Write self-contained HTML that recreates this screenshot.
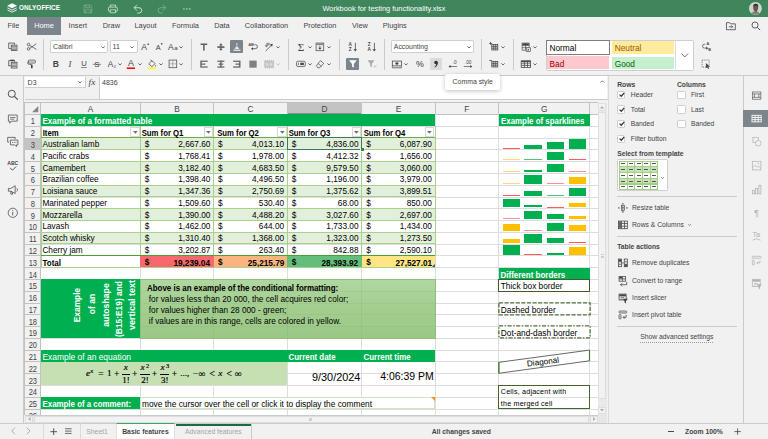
<!DOCTYPE html>
<html><head><meta charset="utf-8"><title>Workbook for testing functionality.xlsx</title>
<style>
html,body{margin:0;padding:0}
body{width:768px;height:439px;overflow:hidden;position:relative;background:#f1f1f1;font-family:'Liberation Sans',sans-serif;color:#444}
div,svg{position:absolute;box-sizing:border-box}
.t{white-space:nowrap}
svg{overflow:visible}
.c{font-family:'Liberation Sans',sans-serif;white-space:nowrap;color:#000}
</style></head><body>
<div style="left:0.00px;top:0.00px;width:768.00px;height:17.20px;background:#40865c"></div>
<svg style="left:5.75px;top:2.40px;" width="12.2" height="12.2" viewBox="0 0 20 20"><path d="M10 2.2 L18.2 6.2 L10 10.2 L1.8 6.2 Z" fill="#fff" /><path d="M2.4 9.6 L10 13.3 L17.6 9.6 M2.4 13 L10 16.7 L17.6 13" fill="none" stroke="#fff" stroke-width="1.4" /></svg>
<div class="t" style="left:19.00px;top:4.36px;font-size:6.45px;line-height:8.38px;color:#fff;font-weight:bold;letter-spacing:0.02px">ONLYOFFICE</div>
<svg style="left:82.00px;top:2.60px;opacity:.4" width="11.8" height="11.8" viewBox="0 0 20 20"><path d="M3.5 3.5 H14 L16.5 6 V16.5 H3.5 Z M6.5 3.5 V8 H13 V3.5 M6 16.5 V11.5 H14 V16.5" fill="none" stroke="#fff" stroke-width="1.1" /></svg>
<svg style="left:107.00px;top:2.60px;" width="11.8" height="11.8" viewBox="0 0 20 20"><path d="M5.5 7 V3.5 H14.5 V7 M5.5 14 H3 a.8 .8 0 0 1 -.5 -.8 V8.5 a1.5 1.5 0 0 1 1.5 -1.5 H16 a1.5 1.5 0 0 1 1.5 1.5 V13.2 a.8 .8 0 0 1 -.5 .8 H14.5 M5.5 11.5 H14.5 V16.5 H5.5 Z" fill="none" stroke="#fff" stroke-width="1.0" /></svg>
<svg style="left:132.10px;top:2.60px;" width="11.8" height="11.8" viewBox="0 0 20 20"><path d="M8.5 3 L3.5 8 L8.5 13 M3.5 8 H12 a4.5 4.5 0 0 1 0 9 H9" fill="none" stroke="#fff" stroke-width="1.2" /></svg>
<svg style="left:156.00px;top:2.60px;opacity:.4" width="11.8" height="11.8" viewBox="0 0 20 20"><path d="M11.5 3 L16.5 8 L11.5 13 M16.5 8 H8 a4.5 4.5 0 0 0 0 9 H11" fill="none" stroke="#fff" stroke-width="1.2" /></svg>
<svg style="left:181.20px;top:2.60px;opacity:.85" width="11.8" height="11.8" viewBox="0 0 20 20"><circle cx="5" cy="10" r="1.2" fill="#fff"/><circle cx="10" cy="10" r="1.2" fill="#fff"/><circle cx="15" cy="10" r="1.2" fill="#fff"/></svg>
<div class="t" style="left:322.50px;top:3.69px;font-size:7.4px;line-height:9.62px;color:#fff;">Workbook for testing functionality.xlsx</div>
<svg style="left:749px;top:2.1px" width="12.8" height="12.8" viewBox="0 0 24 24"><defs><clipPath id="av"><circle cx="12" cy="12" r="12"/></clipPath></defs><circle cx="12" cy="12" r="12" fill="#cbd6ce"/><g clip-path="url(#av)"><path d="M7.5 17.5 q4.8 3.4 9.6 0 l1.2 3 q3.4 1.2 3.8 3.6 h-19.6 q.4 -2.4 3.8 -3.6z" fill="#8a8078"/><rect x="10" y="15" width="5" height="5" fill="#77685c"/><ellipse cx="12.5" cy="10.6" rx="4.6" ry="6.2" fill="#6a574b"/><path d="M7.7 9.6 q.2 -6.4 5 -6.4 q4.8 0 4.8 6 q-1.4 -3.2 -5 -3 q-3.2 .2 -4.8 3.4z" fill="#2a2420"/></g></svg>
<div style="left:0.00px;top:17.20px;width:768.00px;height:17.50px;background:#f1f1f1"></div>
<div style="left:26.80px;top:17.20px;width:33.90px;height:17.50px;background:#7d858c"></div>
<div class="t" style="left:7.40px;top:20.72px;font-size:7.35px;line-height:9.55px;color:#444;">File</div>
<div class="t" style="left:34.20px;top:20.72px;font-size:7.35px;line-height:9.55px;color:#fff;">Home</div>
<div class="t" style="left:68.60px;top:20.72px;font-size:7.35px;line-height:9.55px;color:#444;">Insert</div>
<div class="t" style="left:102.80px;top:20.72px;font-size:7.35px;line-height:9.55px;color:#444;">Draw</div>
<div class="t" style="left:134.50px;top:20.72px;font-size:7.35px;line-height:9.55px;color:#444;">Layout</div>
<div class="t" style="left:172.00px;top:20.72px;font-size:7.35px;line-height:9.55px;color:#444;">Formula</div>
<div class="t" style="left:214.20px;top:20.72px;font-size:7.35px;line-height:9.55px;color:#444;">Data</div>
<div class="t" style="left:244.80px;top:20.72px;font-size:7.35px;line-height:9.55px;color:#444;">Collaboration</div>
<div class="t" style="left:303.40px;top:20.72px;font-size:7.35px;line-height:9.55px;color:#444;">Protection</div>
<div class="t" style="left:352.00px;top:20.72px;font-size:7.35px;line-height:9.55px;color:#444;">View</div>
<div class="t" style="left:382.70px;top:20.72px;font-size:7.35px;line-height:9.55px;color:#444;">Plugins</div>
<svg style="left:724.90px;top:20.30px;" width="11.8" height="11.8" viewBox="0 0 20 20"><path d="M2.5 4.5 H8 L9.5 6.5 H17.5 V16.5 H2.5 Z" fill="none" stroke="#444" stroke-width="1.35" /><path d="M6.5 11.5 H13 M10.5 9 L13 11.5 L10.5 14" fill="none" stroke="#444" stroke-width="1.3" /></svg>
<svg style="left:749.60px;top:20.30px;" width="11.8" height="11.8" viewBox="0 0 20 20"><circle cx="8.5" cy="8.5" r="5.2" fill="none" stroke="#444" stroke-width="1.4"/><path d="M12.4 12.4 L17.2 17.2" fill="none" stroke="#444" stroke-width="1.6" /></svg>
<div style="left:0.00px;top:34.70px;width:768.00px;height:41.10px;background:#f1f1f1;border-bottom:0.7px solid #cbcbcb"></div>
<div style="left:43.35px;top:39.40px;width:0.70px;height:31.10px;background:#cbcbcb"></div>
<div style="left:191.35px;top:39.40px;width:0.70px;height:31.10px;background:#cbcbcb"></div>
<div style="left:288.25px;top:39.40px;width:0.70px;height:31.10px;background:#cbcbcb"></div>
<div style="left:339.05px;top:39.40px;width:0.70px;height:31.10px;background:#cbcbcb"></div>
<div style="left:384.25px;top:39.40px;width:0.70px;height:31.10px;background:#cbcbcb"></div>
<div style="left:480.65px;top:39.40px;width:0.70px;height:31.10px;background:#cbcbcb"></div>
<div style="left:513.05px;top:39.40px;width:0.70px;height:31.10px;background:#cbcbcb"></div>
<svg style="left:6.50px;top:41.00px;" width="11.8" height="11.8" viewBox="0 0 20 20"><rect x="3" y="3.5" width="9.6" height="9" fill="none" stroke="#444" stroke-width="1.3" /><rect x="6.6" y="6.4" width="10.9" height="10.2" fill="#f1f1f1" /><rect x="7.2" y="7" width="9.7" height="9" fill="none" stroke="#444" stroke-width="1.3" /><rect x="8" y="9" width="8" height="1.3" fill="#666" /><rect x="8" y="11.2" width="8" height="1.3" fill="#666" /><rect x="8" y="13.4" width="8" height="1.3" fill="#666" /></svg>
<svg style="left:25.50px;top:41.00px;" width="11.8" height="11.8" viewBox="0 0 20 20"><path d="M6.3 7.4 L17.6 14.2 M6.3 12.6 L17.6 4.6" fill="none" stroke="#444" stroke-width="1.25" /><circle cx="4.3" cy="6" r="2.2" fill="none" stroke="#444" stroke-width="1.25"/><circle cx="4.3" cy="13.4" r="2.2" fill="none" stroke="#444" stroke-width="1.25"/></svg>
<svg style="left:6.50px;top:57.80px;" width="11.8" height="11.8" viewBox="0 0 20 20"><rect x="3" y="4.6" width="10" height="8.6" fill="none" stroke="#444" stroke-width="1.3" /><rect x="5.6" y="2.8" width="6.6" height="2.4" fill="#444" /><rect x="6.6" y="6.6" width="10.9" height="10.9" fill="#f1f1f1" /><rect x="7.2" y="7.2" width="9.7" height="9.8" fill="none" stroke="#444" stroke-width="1.3" /><rect x="8" y="9.2" width="8" height="1.3" fill="#666" /><rect x="8" y="11.5" width="8" height="1.3" fill="#666" /><rect x="8" y="13.8" width="8" height="1.3" fill="#666" /></svg>
<svg style="left:25.50px;top:57.80px;" width="11.8" height="11.8" viewBox="0 0 20 20"><rect x="4.2" y="3.6" width="11.6" height="5" fill="none" stroke="#444" stroke-width="1.3" rx="1"/><rect x="5.4" y="4.6" width="9.4" height="3" fill="#bbb" /><path d="M3.2 6 V10.2 L9.7 11.4" fill="none" stroke="#444" stroke-width="1.2" /><rect x="8.4" y="11.4" width="2.8" height="6" fill="#444" /></svg>
<div style="left:50.40px;top:40.40px;width:57.40px;height:12.90px;background:#fff;border:0.7px solid #cfcfcf;border-radius:1.2px"></div>
<div class="t" style="left:53.00px;top:42.91px;font-size:6.9px;line-height:8.97px;color:#444;">Calibri</div>
<svg style="left:101.15px;top:45.85px" width="4.1" height="2.6" viewBox="0 0 10 6.4"><path d="M1 1.1 L5 4.9 L9 1.1" fill="none" stroke="#444" stroke-width="2"/></svg>
<div style="left:110.00px;top:40.40px;width:27.50px;height:12.90px;background:#fff;border:0.7px solid #cfcfcf;border-radius:1.2px"></div>
<div class="t" style="left:112.60px;top:42.91px;font-size:6.9px;line-height:8.97px;color:#444;">11</div>
<svg style="left:130.45px;top:45.85px" width="4.1" height="2.6" viewBox="0 0 10 6.4"><path d="M1 1.1 L5 4.9 L9 1.1" fill="none" stroke="#444" stroke-width="2"/></svg>
<svg style="left:138.50px;top:41.00px;" width="11.8" height="11.8" viewBox="0 0 20 20"><text x="8.6" y="16" font-size="14.5" text-anchor="middle" fill="#444" font-family="Liberation Sans,sans-serif">A</text><path d="M13.6 6.2 l2 -2.6 l2 2.6 z" fill="#444" /></svg>
<svg style="left:152.60px;top:41.00px;" width="11.8" height="11.8" viewBox="0 0 20 20"><text x="8.8" y="16" font-size="12.5" text-anchor="middle" fill="#444" font-family="Liberation Sans,sans-serif">A</text><path d="M12.8 4 l2 2.6 l2 -2.6 z" fill="#444" /></svg>
<svg style="left:166.70px;top:41.00px;" width="11.8" height="11.8" viewBox="0 0 20 20"><text x="6.5" y="15.5" font-size="14.5" text-anchor="middle" fill="#444" font-family="Liberation Sans,sans-serif">A</text><text x="15.3" y="15.5" font-size="10.5" text-anchor="middle" fill="#444" font-family="Liberation Sans,sans-serif">a</text></svg>
<svg style="left:179.35px;top:45.90px" width="4.1" height="2.6" viewBox="0 0 10 6.4"><path d="M1 1.1 L5 4.9 L9 1.1" fill="none" stroke="#444" stroke-width="2"/></svg>
<svg style="left:50.20px;top:57.90px;" width="11.8" height="11.8" viewBox="0 0 20 20"><text x="10" y="15.5" font-size="14.5" font-weight="bold" text-anchor="middle" fill="#444" font-family="Liberation Sans,sans-serif">B</text></svg>
<svg style="left:63.60px;top:57.90px;" width="11.8" height="11.8" viewBox="0 0 20 20"><text x="10" y="15.5" font-size="14.5" font-style="italic" text-anchor="middle" fill="#444" font-family="Liberation Serif,serif">I</text></svg>
<svg style="left:77.60px;top:57.90px;" width="11.8" height="11.8" viewBox="0 0 20 20"><text x="10" y="14" font-size="13" text-anchor="middle" fill="#444" font-family="Liberation Sans,sans-serif">U</text><rect x="5" y="16" width="10" height="1" fill="#444" /></svg>
<svg style="left:91.20px;top:57.90px;" width="11.8" height="11.8" viewBox="0 0 20 20"><text x="10" y="15" font-size="13.5" text-anchor="middle" fill="#444" font-family="Liberation Sans,sans-serif">S</text><rect x="3" y="10" width="14" height="1" fill="#444" /></svg>
<svg style="left:106.10px;top:57.90px;" width="11.8" height="11.8" viewBox="0 0 20 20"><text x="7.5" y="15" font-size="14" text-anchor="middle" fill="#444" font-family="Liberation Sans,sans-serif">A</text><text x="15" y="17" font-size="7" text-anchor="middle" fill="#444" font-family="Liberation Sans,sans-serif">2</text></svg>
<svg style="left:117.95px;top:62.80px" width="4.1" height="2.6" viewBox="0 0 10 6.4"><path d="M1 1.1 L5 4.9 L9 1.1" fill="none" stroke="#444" stroke-width="2"/></svg>
<svg style="left:125.40px;top:57.90px;" width="11.8" height="11.8" viewBox="0 0 20 20"><text x="10" y="13.8" font-size="15" text-anchor="middle" fill="#444" font-family="Liberation Sans,sans-serif">A</text><rect x="3" y="16" width="14" height="2.6" fill="#ff0000" /></svg>
<svg style="left:138.45px;top:62.80px" width="4.1" height="2.6" viewBox="0 0 10 6.4"><path d="M1 1.1 L5 4.9 L9 1.1" fill="none" stroke="#444" stroke-width="2"/></svg>
<svg style="left:145.80px;top:57.90px;" width="11.8" height="11.8" viewBox="0 0 20 20"><path d="M4.6 10 L10.2 4.4 L15.4 9.6 L10 14.6 Z M7.6 2.8 L11 6.2" fill="none" stroke="#444" stroke-width="1.25" /><path d="M16.6 11.4 q1.8 2.6 0 3.6 q-1.8 -1 0 -3.6" fill="#444" /><rect x="3" y="16" width="14" height="2.6" fill="#ffff00" /></svg>
<svg style="left:158.85px;top:62.80px" width="4.1" height="2.6" viewBox="0 0 10 6.4"><path d="M1 1.1 L5 4.9 L9 1.1" fill="none" stroke="#444" stroke-width="2"/></svg>
<svg style="left:166.60px;top:57.90px;" width="11.8" height="11.8" viewBox="0 0 20 20"><rect x="3.5" y="3.5" width="13" height="13" fill="none" stroke="#444" stroke-width="1.2" /><rect x="9.5" y="4" width="1" height="12" fill="#888" /><rect x="4" y="9.5" width="12" height="1" fill="#888" /></svg>
<svg style="left:179.35px;top:62.80px" width="4.1" height="2.6" viewBox="0 0 10 6.4"><path d="M1 1.1 L5 4.9 L9 1.1" fill="none" stroke="#444" stroke-width="2"/></svg>
<svg style="left:198.10px;top:41.00px;" width="11.8" height="11.8" viewBox="0 0 20 20"><rect x="4.4" y="4.2" width="11.2" height="2.6" fill="#606060" /><rect x="8.7" y="6" width="2.6" height="10.4" fill="#606060" /></svg>
<svg style="left:214.50px;top:41.00px;" width="11.8" height="11.8" viewBox="0 0 20 20"><rect x="4" y="9" width="12" height="2.6" fill="#555" /><path d="M10 4 l3 3.4 h-6 z M10 16.6 l3 -3.4 h-6 z" fill="#555" /><rect x="9.2" y="6" width="1.6" height="9" fill="#555" /></svg>
<div style="left:230.40px;top:40.00px;width:12.60px;height:12.90px;background:#7d858c;border-radius:1px"></div>
<svg style="left:230.80px;top:41.00px;" width="11.8" height="11.8" viewBox="0 0 20 20"><rect x="4" y="14.6" width="12" height="2.2" fill="#e4e6e8" /><rect x="9.3" y="3.4" width="1.4" height="9" fill="#e4e6e8" /><path d="M6 13.6 h8 l-2 -3.4 h-4 z" fill="#e4e6e8" /></svg>
<svg style="left:247.10px;top:41.00px;" width="11.8" height="11.8" viewBox="0 0 20 20"><text x="7" y="8.6" font-size="7" font-weight="bold" text-anchor="middle" fill="#555" font-family="Liberation Sans,sans-serif">AB</text><path d="M12.6 6.2 h1.6 a3.4 3.4 0 0 1 0 6.8 H9.5" fill="none" stroke="#444" stroke-width="1.3" /><path d="M10.2 10.4 l-3.4 2.6 l3.4 2.6 z" fill="#444" /></svg>
<svg style="left:262.90px;top:41.00px;" width="11.8" height="11.8" viewBox="0 0 20 20"><path d="M4.5 17 L14.5 7" fill="none" stroke="#444" stroke-width="1.3" /><text x="4.2" y="8.6" font-size="7.6" font-weight="bold" fill="#555" font-family="Liberation Sans,sans-serif" transform="rotate(-45 8 8)">ab</text><path d="M16.6 4.8 l-1.2 5 l-3.8 -3.8 z" fill="#444" /></svg>
<svg style="left:276.05px;top:45.90px" width="4.1" height="2.6" viewBox="0 0 10 6.4"><path d="M1 1.1 L5 4.9 L9 1.1" fill="none" stroke="#444" stroke-width="2"/></svg>
<svg style="left:198.40px;top:57.90px;" width="11.8" height="11.8" viewBox="0 0 20 20"><rect x="4" y="4.4" width="2.2" height="12" fill="#555" /><rect x="6" y="4.4" width="10.4" height="2.2" fill="#6a6a6a" /><rect x="6" y="9.3" width="6.4" height="2.2" fill="#6a6a6a" /><rect x="6" y="14.2" width="10.4" height="2.2" fill="#6a6a6a" /></svg>
<svg style="left:214.50px;top:57.90px;" width="11.8" height="11.8" viewBox="0 0 20 20"><rect x="8.9" y="4.4" width="2.2" height="12" fill="#555" /><rect x="4" y="4.4" width="12" height="2.2" fill="#6a6a6a" /><rect x="6" y="9.3" width="8" height="2.2" fill="#6a6a6a" /><rect x="4" y="14.2" width="12" height="2.2" fill="#6a6a6a" /></svg>
<svg style="left:230.70px;top:57.90px;" width="11.8" height="11.8" viewBox="0 0 20 20"><rect x="13.8" y="4.4" width="2.2" height="12" fill="#555" /><rect x="3.6" y="4.4" width="10.4" height="2.2" fill="#6a6a6a" /><rect x="7.6" y="9.3" width="6.4" height="2.2" fill="#6a6a6a" /><rect x="3.6" y="14.2" width="10.4" height="2.2" fill="#6a6a6a" /></svg>
<svg style="left:246.90px;top:57.90px;" width="11.8" height="11.8" viewBox="0 0 20 20"><rect x="4" y="4.4" width="12.4" height="12" fill="#808080" /></svg>
<svg style="left:262.60px;top:57.90px;" width="11.8" height="11.8" viewBox="0 0 20 20"><rect x="3.2" y="5" width="14.4" height="11" fill="#c9c9c9" /><rect x="2.8" y="4.6" width="15.2" height="11.8" fill="none" stroke="#9a9a9a" stroke-width="1.2" stroke-dasharray="2.2 1.4"/><path d="M6 8.4 l2.6 2.2 l-2.6 2.2 z M14.6 8.4 l-2.6 2.2 l2.6 2.2 z" fill="#f1f1f1" /></svg>
<svg style="left:276.05px;top:62.80px" width="4.1" height="2.6" viewBox="0 0 10 6.4"><path d="M1 1.1 L5 4.9 L9 1.1" fill="none" stroke="#b5b5b5" stroke-width="2"/></svg>
<svg style="left:294.90px;top:41.00px;" width="11.8" height="11.8" viewBox="0 0 20 20"><text x="10" y="16.5" font-size="19" text-anchor="middle" fill="#444" font-family="Liberation Serif,serif">Σ</text></svg>
<svg style="left:308.05px;top:45.90px" width="4.1" height="2.6" viewBox="0 0 10 6.4"><path d="M1 1.1 L5 4.9 L9 1.1" fill="none" stroke="#444" stroke-width="2"/></svg>
<svg style="left:313.90px;top:41.00px;" width="11.8" height="11.8" viewBox="0 0 20 20"><rect x="3.5" y="3.5" width="13" height="13" fill="none" stroke="#444" stroke-width="1.2" /><rect x="4" y="4" width="12" height="3" fill="#888" /><rect x="9.4" y="8" width="1.2" height="5" fill="#444" /><path d="M10 15 l-3 -3.5 h6 z" fill="#444" /></svg>
<svg style="left:327.35px;top:45.90px" width="4.1" height="2.6" viewBox="0 0 10 6.4"><path d="M1 1.1 L5 4.9 L9 1.1" fill="none" stroke="#444" stroke-width="2"/></svg>
<svg style="left:295.10px;top:57.90px;" width="11.8" height="11.8" viewBox="0 0 20 20"><rect x="2.5" y="5.5" width="15" height="9" fill="none" stroke="#444" stroke-width="1.2" rx="2.5"/><rect x="9" y="8" width="6" height="4" fill="#444" /><rect x="5" y="8" width="1.2" height="4" fill="#444" /></svg>
<svg style="left:308.05px;top:62.80px" width="4.1" height="2.6" viewBox="0 0 10 6.4"><path d="M1 1.1 L5 4.9 L9 1.1" fill="none" stroke="#444" stroke-width="2"/></svg>
<svg style="left:313.90px;top:57.90px;" width="11.8" height="11.8" viewBox="0 0 20 20"><path d="M4 13 L11 4.5 L16.5 9 L10 16.5 H6.5 Z M7 9.5 L12.5 14" fill="none" stroke="#444" stroke-width="1.2" /></svg>
<svg style="left:327.35px;top:62.80px" width="4.1" height="2.6" viewBox="0 0 10 6.4"><path d="M1 1.1 L5 4.9 L9 1.1" fill="none" stroke="#444" stroke-width="2"/></svg>
<svg style="left:346.70px;top:41.00px;" width="11.8" height="11.8" viewBox="0 0 20 20"><text x="5.5" y="9" font-size="8" font-weight="bold" text-anchor="middle" fill="#444" font-family="Liberation Sans,sans-serif">A</text><text x="5.5" y="17.5" font-size="8" font-weight="bold" text-anchor="middle" fill="#444" font-family="Liberation Sans,sans-serif">Z</text><rect x="13.4" y="3" width="1.3" height="12" fill="#444" /><path d="M14 18 l-3 -4 h6 z" fill="#444" /></svg>
<svg style="left:366.10px;top:41.00px;" width="11.8" height="11.8" viewBox="0 0 20 20"><text x="5.5" y="9" font-size="8" font-weight="bold" text-anchor="middle" fill="#444" font-family="Liberation Sans,sans-serif">Z</text><text x="5.5" y="17.5" font-size="8" font-weight="bold" text-anchor="middle" fill="#444" font-family="Liberation Sans,sans-serif">A</text><rect x="13.4" y="3" width="1.3" height="12" fill="#444" /><path d="M14 18 l-3 -4 h6 z" fill="#444" /></svg>
<div style="left:346.20px;top:57.60px;width:12.60px;height:12.50px;background:#7d858c;border-radius:1px"></div>
<svg style="left:346.60px;top:57.90px;" width="11.8" height="11.8" viewBox="0 0 20 20"><path d="M3.5 4 h13 l-5 6 v6.5 l-3 -2 v-4.5 z" fill="#fff" /></svg>
<svg style="left:365.80px;top:57.90px;" width="11.8" height="11.8" viewBox="0 0 20 20"><path d="M2.5 4 h12 l-4.6 5.6 v6 l-2.8 -1.8 v-4.2 z" fill="#aaa" /><path d="M13.5 12.5 l4 4 M17.5 12.5 l-4 4" fill="none" stroke="#aaa" stroke-width="1" /></svg>
<div style="left:391.20px;top:40.40px;width:83.10px;height:12.90px;background:#fff;border:0.7px solid #cfcfcf;border-radius:1.2px"></div>
<div class="t" style="left:393.80px;top:42.91px;font-size:6.9px;line-height:8.97px;color:#444;">Accounting</div>
<svg style="left:467.35px;top:45.85px" width="4.1" height="2.6" viewBox="0 0 10 6.4"><path d="M1 1.1 L5 4.9 L9 1.1" fill="none" stroke="#444" stroke-width="2"/></svg>
<svg style="left:391.00px;top:57.90px;" width="11.8" height="11.8" viewBox="0 0 20 20"><rect x="2.2" y="5.2" width="15.6" height="8.2" fill="none" stroke="#444" stroke-width="1.3" /><ellipse cx="10" cy="9.3" rx="2.6" ry="2.2" fill="#444"/><path d="M2.2 14.2 V16.6 H17.8 V14.2" fill="none" stroke="#444" stroke-width="1.2" /></svg>
<svg style="left:404.45px;top:62.80px" width="4.1" height="2.6" viewBox="0 0 10 6.4"><path d="M1 1.1 L5 4.9 L9 1.1" fill="none" stroke="#444" stroke-width="2"/></svg>
<svg style="left:413.90px;top:57.90px;" width="11.8" height="11.8" viewBox="0 0 20 20"><text x="10" y="15.6" font-size="15" text-anchor="middle" fill="#333" font-family="Liberation Sans,sans-serif">%</text></svg>
<div style="left:429.90px;top:58.00px;width:12.00px;height:11.80px;background:#d8dadc;border-radius:1px"></div>
<svg style="left:430.00px;top:57.90px;" width="11.8" height="11.8" viewBox="0 0 20 20"><circle cx="10.2" cy="7.6" r="3.1" fill="#333"/><path d="M13.3 7.4 q.4 5.8 -5 8.8 l-.8 -1.1 q3 -1.9 3 -5.1 z" fill="#333" /></svg>
<svg style="left:446.90px;top:57.90px;" width="11.8" height="11.8" viewBox="0 0 20 20"><text x="13" y="9.5" font-size="8" text-anchor="middle" fill="#444" font-family="Liberation Sans,sans-serif">.0</text><rect x="5" y="14" width="12" height="1.1" fill="#444" /><path d="M2.5 14.5 l3.5 -2.6 v5.2 z" fill="#444" /></svg>
<svg style="left:462.20px;top:57.90px;" width="11.8" height="11.8" viewBox="0 0 20 20"><text x="10.5" y="9.5" font-size="8" text-anchor="middle" fill="#444" font-family="Liberation Sans,sans-serif">.00</text><rect x="3" y="14" width="12" height="1.1" fill="#444" /><path d="M17.5 14.5 l-3.5 -2.6 v5.2 z" fill="#444" /></svg>
<svg style="left:487.70px;top:41.00px;" width="11.8" height="11.8" viewBox="0 0 20 20"><rect x="6.4" y="5.8" width="10.2" height="9.4" fill="none" stroke="#444" stroke-width="1.3" /><rect x="9.15" y="5.8" width="1.3" height="9.4" fill="#444" /><rect x="12.549999999999999" y="5.8" width="1.3" height="9.4" fill="#444" /><rect x="6.4" y="8.283333333333333" width="10.2" height="1.3" fill="#444" /><rect x="6.4" y="11.416666666666666" width="10.2" height="1.3" fill="#444" /><rect x="3.9" y="1.6" width="1.2" height="4.8" fill="#333" /><rect x="2.1" y="3.4" width="4.8" height="1.2" fill="#333" /></svg>
<svg style="left:500.85px;top:45.90px" width="4.1" height="2.6" viewBox="0 0 10 6.4"><path d="M1 1.1 L5 4.9 L9 1.1" fill="none" stroke="#444" stroke-width="2"/></svg>
<svg style="left:487.70px;top:57.90px;" width="11.8" height="11.8" viewBox="0 0 20 20"><rect x="6.4" y="5.8" width="10.2" height="9.4" fill="none" stroke="#444" stroke-width="1.3" /><rect x="9.15" y="5.8" width="1.3" height="9.4" fill="#444" /><rect x="12.549999999999999" y="5.8" width="1.3" height="9.4" fill="#444" /><rect x="6.4" y="8.283333333333333" width="10.2" height="1.3" fill="#444" /><rect x="6.4" y="11.416666666666666" width="10.2" height="1.3" fill="#444" /><rect x="2.1" y="3.4" width="4.8" height="1.2" fill="#333" /></svg>
<svg style="left:500.85px;top:62.80px" width="4.1" height="2.6" viewBox="0 0 10 6.4"><path d="M1 1.1 L5 4.9 L9 1.1" fill="none" stroke="#444" stroke-width="2"/></svg>
<svg style="left:519.50px;top:41.00px;" width="11.8" height="11.8" viewBox="0 0 20 20"><rect x="3.5" y="3.5" width="12" height="12" fill="none" stroke="#444" stroke-width="1.1" /><rect x="8.95" y="3.5" width="1.1" height="12" fill="#444" /><rect x="3.5" y="6.95" width="12" height="1.1" fill="#444" /><rect x="3.5" y="10.95" width="12" height="1.1" fill="#444" /><rect x="4" y="4" width="11" height="3" fill="#444" /><rect x="10" y="11" width="8" height="7.5" fill="#f1f1f1" /><rect x="10.5" y="11.5" width="7" height="6.5" fill="none" stroke="#444" stroke-width="1.1" /><path d="M13 13 l3 1.9 l-3 1.9 z" fill="#444" /></svg>
<svg style="left:533.15px;top:45.90px" width="4.1" height="2.6" viewBox="0 0 10 6.4"><path d="M1 1.1 L5 4.9 L9 1.1" fill="none" stroke="#444" stroke-width="2"/></svg>
<svg style="left:519.50px;top:57.90px;" width="11.8" height="11.8" viewBox="0 0 20 20"><rect x="2" y="5" width="16" height="11" fill="none" stroke="#444" stroke-width="1.3" /><rect x="6.683333333333333" y="5" width="1.3" height="11" fill="#444" /><rect x="12.016666666666666" y="5" width="1.3" height="11" fill="#444" /><rect x="2" y="8.016666666666666" width="16" height="1.3" fill="#444" /><rect x="2" y="11.683333333333332" width="16" height="1.3" fill="#444" /><rect x="2" y="4.4" width="16" height="2.2" fill="#444" /></svg>
<svg style="left:533.15px;top:62.80px" width="4.1" height="2.6" viewBox="0 0 10 6.4"><path d="M1 1.1 L5 4.9 L9 1.1" fill="none" stroke="#444" stroke-width="2"/></svg>
<div style="left:545.50px;top:40.00px;width:148.00px;height:30.80px;background:#fff;border:0.7px solid #cfcfcf;border-radius:1.5px"></div>
<div style="left:675.00px;top:40.00px;width:0.70px;height:30.80px;background:#dcdcdc"></div>
<div style="left:545.60px;top:40.10px;width:64.40px;height:15.20px;background:#fff;border:1.2px solid #7f7f7f"></div>
<div style="left:546.60px;top:56.40px;width:62.60px;height:12.80px;background:#ffc7ce"></div>
<div style="left:611.80px;top:41.40px;width:62.40px;height:12.50px;background:#ffeb9c"></div>
<div style="left:611.80px;top:56.90px;width:62.40px;height:12.30px;background:#c6efce"></div>
<div class="t" style="left:549.50px;top:43.20px;font-size:8.3px;line-height:10.79px;color:#000;">Normal</div>
<div class="t" style="left:549.50px;top:58.50px;font-size:8.3px;line-height:10.79px;color:#9c0006;">Bad</div>
<div class="t" style="left:614.70px;top:43.20px;font-size:8.3px;line-height:10.79px;color:#9c5700;">Neutral</div>
<div class="t" style="left:614.70px;top:58.50px;font-size:8.3px;line-height:10.79px;color:#006100;">Good</div>
<svg style="left:680.5px;top:52.8px" width="7.6" height="4.6" viewBox="0 0 7.6 4.6"><path d="M.5 .6 L3.8 3.9 L7.1 .6" fill="none" stroke="#444" stroke-width=".8"/></svg>
<svg style="left:700.30px;top:40.50px;" width="11.8" height="11.8" viewBox="0 0 20 20"><path d="M11 12 H7.5 a3.2 3.2 0 0 1 0 -6.4 H9" fill="none" stroke="#444" stroke-width="1.2" /><path d="M10.5 9.5 l3.5 2.6 l-3.5 2.6 z" fill="#444" /><text x="13.5" y="7" font-size="6.5" font-weight="bold" text-anchor="middle" fill="#444" font-family="Liberation Sans,sans-serif">A</text><text x="16.5" y="16.5" font-size="6.5" font-weight="bold" text-anchor="middle" fill="#444" font-family="Liberation Sans,sans-serif">B</text></svg>
<svg style="left:700.30px;top:58.40px;" width="11.8" height="11.8" viewBox="0 0 20 20"><rect x="3.5" y="3.5" width="12" height="12" fill="none" stroke="#444" stroke-width="1.1" stroke-dasharray="2 1.6"/><path d="M10 8.5 v9 l2.2 -2 l1.6 3.3 l1.6 -.8 l-1.6 -3.2 h3 z" fill="#444" /></svg>
<div style="left:0.00px;top:75.80px;width:768.00px;height:27.10px;background:#f1f1f1"></div>
<div style="left:24.60px;top:76.50px;width:61.50px;height:11.90px;background:#fff;border:0.7px solid #cfcfcf;border-left:none;border-top:none"></div>
<div class="t" style="left:27.60px;top:77.75px;font-size:7.0px;line-height:9.10px;color:#444;">D3</div>
<svg style="left:77.95px;top:81.30px" width="4.1" height="2.6" viewBox="0 0 10 6.4"><path d="M1 1.1 L5 4.9 L9 1.1" fill="none" stroke="#444" stroke-width="2"/></svg>
<div style="left:86.10px;top:76.50px;width:14.00px;height:23.00px;border-right:0.7px solid #cbcbcb"></div>
<div class="t" style="left:88.6px;top:76.6px;font-size:9.2px;line-height:11px;font-style:italic;font-family:'Liberation Serif',serif;color:#444">fx</div>
<div style="left:100.20px;top:76.00px;width:507.00px;height:23.40px;background:#fff"></div>
<div class="t" style="left:102.00px;top:77.75px;font-size:7.0px;line-height:9.10px;color:#444;">4836</div>
<div style="left:24.60px;top:99.30px;width:583.00px;height:0.70px;background:#cbcbcb"></div>
<svg style="left:600.3px;top:80px" width="4.6" height="3" viewBox="0 0 9 6"><path d="M1 5 L4.5 1.5 L8 5" fill="none" stroke="#444" stroke-width="1.4"/></svg>
<div style="left:445.00px;top:73.60px;width:55.20px;height:16.50px;background:#fff;border-radius:2.6px;box-shadow:0 1.2px 4.5px rgba(0,0,0,.24)"></div>
<div class="t" style="left:452.60px;top:77.81px;font-size:6.9px;line-height:8.97px;color:#444;">Comma style</div>
<div style="left:0.00px;top:75.80px;width:24.40px;height:348.20px;background:#f1f1f1;border-right:0.7px solid #cbcbcb"></div>
<svg style="left:5.50px;top:87.80px;" width="13.6" height="13.6" viewBox="0 0 20 20"><circle cx="8.5" cy="8.5" r="5.2" fill="none" stroke="#444" stroke-width="1.4"/><path d="M12.4 12.4 L17.2 17.2" fill="none" stroke="#444" stroke-width="1.6" /></svg>
<svg style="left:5.50px;top:111.50px;" width="13.6" height="13.6" viewBox="0 0 20 20"><path d="M3.5 4.5 H16.5 V13.5 H8 L5.5 16.5 V13.5 H3.5 Z" fill="none" stroke="#444" stroke-width="1.1" /><rect x="6" y="7.5" width="8" height="1" fill="#444" /><rect x="6" y="10" width="6" height="1" fill="#444" /></svg>
<svg style="left:5.50px;top:135.20px;" width="13.6" height="13.6" viewBox="0 0 20 20"><path d="M2.5 3.5 H13.5 V6" fill="none" stroke="#444" stroke-width="1.1" /><path d="M2.5 3.5 V10.5 H4.5" fill="none" stroke="#444" stroke-width="1.1" /><path d="M6.5 7.5 H17.5 V14.5 H15.5 V17 L12.5 14.5 H6.5 Z" fill="none" stroke="#444" stroke-width="1.1" /><rect x="9" y="10.5" width="1.2" height="1.2" fill="#444" /><rect x="11.5" y="10.5" width="1.2" height="1.2" fill="#444" /><rect x="14" y="10.5" width="1.2" height="1.2" fill="#444" /></svg>
<svg style="left:5.50px;top:158.90px;" width="13.6" height="13.6" viewBox="0 0 20 20"><text x="10" y="9.5" font-size="7.5" font-weight="bold" text-anchor="middle" fill="#444" font-family="Liberation Sans,sans-serif">ABC</text><path d="M6 13 L9.5 16.5 L15 11" fill="none" stroke="#444" stroke-width="1.3" /></svg>
<svg style="left:5.50px;top:182.60px;" width="13.6" height="13.6" viewBox="0 0 20 20"><path d="M3.5 8 H7 L13.5 4 V15.5 L7 12 H3.5 Z M7.2 12 V16.5 H9.5 V13.2 M15.5 7.5 a3 3 0 0 1 0 5" fill="none" stroke="#444" stroke-width="1.1" /></svg>
<svg style="left:5.50px;top:206.40px;" width="13.6" height="13.6" viewBox="0 0 20 20"><circle cx="10" cy="10" r="6.8" fill="none" stroke="#444" stroke-width="1.1"/><rect x="9.4" y="8.8" width="1.2" height="5" fill="#444" /><rect x="9.4" y="6" width="1.2" height="1.4" fill="#444" /></svg>
<div style="left:24.60px;top:102.30px;width:573.80px;height:312.80px;background:#fff"></div>
<div style="left:24.60px;top:102.30px;width:573.80px;height:12.10px;background:#f1f1f1"></div>
<div style="left:24.60px;top:102.30px;width:16.20px;height:312.80px;background:#f1f1f1"></div>
<div style="left:287.40px;top:102.70px;width:74.40px;height:11.70px;background:#c3c3c3;border-bottom:1.1px solid #8a8a8a"></div>
<div style="left:24.60px;top:137.96px;width:16.20px;height:11.78px;background:#c3c3c3;border-right:1.1px solid #8a8a8a"></div>
<svg style="left:31.9px;top:105.7px" width="6.3" height="6.3" viewBox="0 0 7 7"><path d="M7 0 V7 H0 Z" fill="#80888f"/></svg>
<div style="left:24.60px;top:101.95px;width:573.80px;height:0.70px;background:#c2c2c2"></div>
<div style="left:24.60px;top:113.95px;width:573.80px;height:0.80px;background:#c2c2c2"></div>
<div style="left:24.40px;top:102.30px;width:0.70px;height:312.80px;background:#c2c2c2"></div>
<div style="left:40.20px;top:102.30px;width:0.80px;height:312.80px;background:#c2c2c2"></div>
<div style="left:140.05px;top:102.30px;width:0.70px;height:12.10px;background:#c2c2c2"></div>
<div class="t" style="left:40.80px;top:103.81px;font-size:8.3px;line-height:10.79px;color:#444;width:99.60px;text-align:center;">A</div>
<div style="left:213.35px;top:102.30px;width:0.70px;height:12.10px;background:#c2c2c2"></div>
<div class="t" style="left:140.40px;top:103.81px;font-size:8.3px;line-height:10.79px;color:#444;width:73.30px;text-align:center;">B</div>
<div style="left:287.05px;top:102.30px;width:0.70px;height:12.10px;background:#c2c2c2"></div>
<div class="t" style="left:213.70px;top:103.81px;font-size:8.3px;line-height:10.79px;color:#444;width:73.70px;text-align:center;">C</div>
<div style="left:361.45px;top:102.30px;width:0.70px;height:12.10px;background:#c2c2c2"></div>
<div class="t" style="left:287.40px;top:103.81px;font-size:8.3px;line-height:10.79px;color:#444;width:74.40px;text-align:center;">D</div>
<div style="left:434.85px;top:102.30px;width:0.70px;height:12.10px;background:#c2c2c2"></div>
<div class="t" style="left:361.80px;top:103.81px;font-size:8.3px;line-height:10.79px;color:#444;width:73.40px;text-align:center;">E</div>
<div style="left:498.25px;top:102.30px;width:0.70px;height:12.10px;background:#c2c2c2"></div>
<div class="t" style="left:435.20px;top:103.81px;font-size:8.3px;line-height:10.79px;color:#444;width:63.40px;text-align:center;">F</div>
<div style="left:589.35px;top:102.30px;width:0.70px;height:12.10px;background:#c2c2c2"></div>
<div class="t" style="left:498.60px;top:103.81px;font-size:8.3px;line-height:10.79px;color:#444;width:91.10px;text-align:center;">G</div>
<div style="left:598.05px;top:102.30px;width:0.70px;height:12.10px;background:#c2c2c2"></div>
<div style="left:24.60px;top:125.83px;width:16.20px;height:0.70px;background:#c2c2c2"></div>
<div class="t" style="left:24.6px;top:114.40px;width:15.70px;height:11.78px;overflow:hidden;text-align:center;font-size:8.4px;line-height:14.18px;color:#444;transform:scaleX(.9)">1</div>
<div style="left:24.60px;top:137.61px;width:16.20px;height:0.70px;background:#c2c2c2"></div>
<div class="t" style="left:24.6px;top:126.18px;width:15.70px;height:11.78px;overflow:hidden;text-align:center;font-size:8.4px;line-height:14.18px;color:#444;transform:scaleX(.9)">2</div>
<div style="left:24.60px;top:149.39px;width:16.20px;height:0.70px;background:#c2c2c2"></div>
<div class="t" style="left:24.6px;top:137.96px;width:15.70px;height:11.78px;overflow:hidden;text-align:center;font-size:8.4px;line-height:14.18px;color:#444;transform:scaleX(.9)">3</div>
<div style="left:24.60px;top:161.17px;width:16.20px;height:0.70px;background:#c2c2c2"></div>
<div class="t" style="left:24.6px;top:149.74px;width:15.70px;height:11.78px;overflow:hidden;text-align:center;font-size:8.4px;line-height:14.18px;color:#444;transform:scaleX(.9)">4</div>
<div style="left:24.60px;top:172.95px;width:16.20px;height:0.70px;background:#c2c2c2"></div>
<div class="t" style="left:24.6px;top:161.52px;width:15.70px;height:11.78px;overflow:hidden;text-align:center;font-size:8.4px;line-height:14.18px;color:#444;transform:scaleX(.9)">5</div>
<div style="left:24.60px;top:184.73px;width:16.20px;height:0.70px;background:#c2c2c2"></div>
<div class="t" style="left:24.6px;top:173.30px;width:15.70px;height:11.78px;overflow:hidden;text-align:center;font-size:8.4px;line-height:14.18px;color:#444;transform:scaleX(.9)">6</div>
<div style="left:24.60px;top:196.51px;width:16.20px;height:0.70px;background:#c2c2c2"></div>
<div class="t" style="left:24.6px;top:185.08px;width:15.70px;height:11.78px;overflow:hidden;text-align:center;font-size:8.4px;line-height:14.18px;color:#444;transform:scaleX(.9)">7</div>
<div style="left:24.60px;top:208.29px;width:16.20px;height:0.70px;background:#c2c2c2"></div>
<div class="t" style="left:24.6px;top:196.86px;width:15.70px;height:11.78px;overflow:hidden;text-align:center;font-size:8.4px;line-height:14.18px;color:#444;transform:scaleX(.9)">8</div>
<div style="left:24.60px;top:220.07px;width:16.20px;height:0.70px;background:#c2c2c2"></div>
<div class="t" style="left:24.6px;top:208.64px;width:15.70px;height:11.78px;overflow:hidden;text-align:center;font-size:8.4px;line-height:14.18px;color:#444;transform:scaleX(.9)">9</div>
<div style="left:24.60px;top:231.85px;width:16.20px;height:0.70px;background:#c2c2c2"></div>
<div class="t" style="left:24.6px;top:220.42px;width:15.70px;height:11.78px;overflow:hidden;text-align:center;font-size:8.4px;line-height:14.18px;color:#444;transform:scaleX(.9)">10</div>
<div style="left:24.60px;top:243.63px;width:16.20px;height:0.70px;background:#c2c2c2"></div>
<div class="t" style="left:24.6px;top:232.20px;width:15.70px;height:11.78px;overflow:hidden;text-align:center;font-size:8.4px;line-height:14.18px;color:#444;transform:scaleX(.9)">11</div>
<div style="left:24.60px;top:255.41px;width:16.20px;height:0.70px;background:#c2c2c2"></div>
<div class="t" style="left:24.6px;top:243.98px;width:15.70px;height:11.78px;overflow:hidden;text-align:center;font-size:8.4px;line-height:14.18px;color:#444;transform:scaleX(.9)">12</div>
<div style="left:24.60px;top:267.19px;width:16.20px;height:0.70px;background:#c2c2c2"></div>
<div class="t" style="left:24.6px;top:255.76px;width:15.70px;height:11.78px;overflow:hidden;text-align:center;font-size:8.4px;line-height:14.18px;color:#444;transform:scaleX(.9)">13</div>
<div style="left:24.60px;top:278.97px;width:16.20px;height:0.70px;background:#c2c2c2"></div>
<div class="t" style="left:24.6px;top:267.54px;width:15.70px;height:11.78px;overflow:hidden;text-align:center;font-size:8.4px;line-height:14.18px;color:#444;transform:scaleX(.9)">14</div>
<div style="left:24.60px;top:290.75px;width:16.20px;height:0.70px;background:#c2c2c2"></div>
<div class="t" style="left:24.6px;top:279.32px;width:15.70px;height:11.78px;overflow:hidden;text-align:center;font-size:8.4px;line-height:14.18px;color:#444;transform:scaleX(.9)">15</div>
<div style="left:24.60px;top:302.53px;width:16.20px;height:0.70px;background:#c2c2c2"></div>
<div class="t" style="left:24.6px;top:291.10px;width:15.70px;height:11.78px;overflow:hidden;text-align:center;font-size:8.4px;line-height:14.18px;color:#444;transform:scaleX(.9)">16</div>
<div style="left:24.60px;top:314.31px;width:16.20px;height:0.70px;background:#c2c2c2"></div>
<div class="t" style="left:24.6px;top:302.88px;width:15.70px;height:11.78px;overflow:hidden;text-align:center;font-size:8.4px;line-height:14.18px;color:#444;transform:scaleX(.9)">17</div>
<div style="left:24.60px;top:326.09px;width:16.20px;height:0.70px;background:#c2c2c2"></div>
<div class="t" style="left:24.6px;top:314.66px;width:15.70px;height:11.78px;overflow:hidden;text-align:center;font-size:8.4px;line-height:14.18px;color:#444;transform:scaleX(.9)">18</div>
<div style="left:24.60px;top:337.87px;width:16.20px;height:0.70px;background:#c2c2c2"></div>
<div class="t" style="left:24.6px;top:326.44px;width:15.70px;height:11.78px;overflow:hidden;text-align:center;font-size:8.4px;line-height:14.18px;color:#444;transform:scaleX(.9)">19</div>
<div style="left:24.60px;top:349.65px;width:16.20px;height:0.70px;background:#c2c2c2"></div>
<div class="t" style="left:24.6px;top:338.22px;width:15.70px;height:11.78px;overflow:hidden;text-align:center;font-size:8.4px;line-height:14.18px;color:#444;transform:scaleX(.9)">20</div>
<div style="left:24.60px;top:361.43px;width:16.20px;height:0.70px;background:#c2c2c2"></div>
<div class="t" style="left:24.6px;top:350.00px;width:15.70px;height:11.78px;overflow:hidden;text-align:center;font-size:8.4px;line-height:14.18px;color:#444;transform:scaleX(.9)">21</div>
<div style="left:24.60px;top:373.21px;width:16.20px;height:0.70px;background:#c2c2c2"></div>
<div class="t" style="left:24.6px;top:361.78px;width:15.70px;height:11.78px;overflow:hidden;text-align:center;font-size:8.4px;line-height:14.18px;color:#444;transform:scaleX(.9)">22</div>
<div style="left:24.60px;top:384.99px;width:16.20px;height:0.70px;background:#c2c2c2"></div>
<div class="t" style="left:24.6px;top:373.56px;width:15.70px;height:11.78px;overflow:hidden;text-align:center;font-size:8.4px;line-height:14.18px;color:#444;transform:scaleX(.9)">23</div>
<div style="left:24.60px;top:396.77px;width:16.20px;height:0.70px;background:#c2c2c2"></div>
<div class="t" style="left:24.6px;top:385.34px;width:15.70px;height:11.78px;overflow:hidden;text-align:center;font-size:8.4px;line-height:14.18px;color:#444;transform:scaleX(.9)">24</div>
<div style="left:24.60px;top:408.55px;width:16.20px;height:0.70px;background:#c2c2c2"></div>
<div class="t" style="left:24.6px;top:397.12px;width:15.70px;height:11.78px;overflow:hidden;text-align:center;font-size:8.4px;line-height:14.18px;color:#444;transform:scaleX(.9)">25</div>
<div class="t" style="left:24.6px;top:408.90px;width:15.70px;height:6.20px;overflow:hidden;text-align:center;font-size:8.4px;line-height:14.18px;color:#444;transform:scaleX(.9)">26</div>
<div style="left:140.05px;top:114.40px;width:0.70px;height:300.70px;background:#dddddd"></div>
<div style="left:213.35px;top:114.40px;width:0.70px;height:300.70px;background:#dddddd"></div>
<div style="left:287.05px;top:114.40px;width:0.70px;height:300.70px;background:#dddddd"></div>
<div style="left:361.45px;top:114.40px;width:0.70px;height:300.70px;background:#dddddd"></div>
<div style="left:434.85px;top:114.40px;width:0.70px;height:300.70px;background:#dddddd"></div>
<div style="left:498.25px;top:114.40px;width:0.70px;height:300.70px;background:#dddddd"></div>
<div style="left:589.35px;top:114.40px;width:0.70px;height:300.70px;background:#dddddd"></div>
<div style="left:40.80px;top:125.83px;width:557.60px;height:0.70px;background:#dddddd"></div>
<div style="left:40.80px;top:137.61px;width:557.60px;height:0.70px;background:#dddddd"></div>
<div style="left:40.80px;top:149.39px;width:557.60px;height:0.70px;background:#dddddd"></div>
<div style="left:40.80px;top:161.17px;width:557.60px;height:0.70px;background:#dddddd"></div>
<div style="left:40.80px;top:172.95px;width:557.60px;height:0.70px;background:#dddddd"></div>
<div style="left:40.80px;top:184.73px;width:557.60px;height:0.70px;background:#dddddd"></div>
<div style="left:40.80px;top:196.51px;width:557.60px;height:0.70px;background:#dddddd"></div>
<div style="left:40.80px;top:208.29px;width:557.60px;height:0.70px;background:#dddddd"></div>
<div style="left:40.80px;top:220.07px;width:557.60px;height:0.70px;background:#dddddd"></div>
<div style="left:40.80px;top:231.85px;width:557.60px;height:0.70px;background:#dddddd"></div>
<div style="left:40.80px;top:243.63px;width:557.60px;height:0.70px;background:#dddddd"></div>
<div style="left:40.80px;top:255.41px;width:557.60px;height:0.70px;background:#dddddd"></div>
<div style="left:40.80px;top:267.19px;width:557.60px;height:0.70px;background:#dddddd"></div>
<div style="left:40.80px;top:278.97px;width:557.60px;height:0.70px;background:#dddddd"></div>
<div style="left:40.80px;top:290.75px;width:557.60px;height:0.70px;background:#dddddd"></div>
<div style="left:40.80px;top:302.53px;width:557.60px;height:0.70px;background:#dddddd"></div>
<div style="left:40.80px;top:314.31px;width:557.60px;height:0.70px;background:#dddddd"></div>
<div style="left:40.80px;top:326.09px;width:557.60px;height:0.70px;background:#dddddd"></div>
<div style="left:40.80px;top:337.87px;width:557.60px;height:0.70px;background:#dddddd"></div>
<div style="left:40.80px;top:349.65px;width:557.60px;height:0.70px;background:#dddddd"></div>
<div style="left:40.80px;top:361.43px;width:557.60px;height:0.70px;background:#dddddd"></div>
<div style="left:40.80px;top:373.21px;width:557.60px;height:0.70px;background:#dddddd"></div>
<div style="left:40.80px;top:384.99px;width:557.60px;height:0.70px;background:#dddddd"></div>
<div style="left:40.80px;top:396.77px;width:557.60px;height:0.70px;background:#dddddd"></div>
<div style="left:40.80px;top:408.55px;width:557.60px;height:0.70px;background:#dddddd"></div>
<div style="left:40.80px;top:114.40px;width:394.40px;height:11.78px;background:#00b050;"><div class="c" style="left:0;right:0;top:0.00px;height:11.78px;line-height:14.38px;font-size:8.65px;color:#fff;font-weight:bold;text-align:left;padding:0 1.6px;transform:scaleX(.93);transform-origin:left center;">Example of a formatted table</div></div>
<div style="left:498.60px;top:114.40px;width:91.10px;height:11.78px;background:#00b050;"><div class="c" style="left:0;right:0;top:0.00px;height:11.78px;line-height:14.38px;font-size:8.49px;color:#fff;font-weight:bold;text-align:left;padding:0 2.2px;transform:scaleX(.93);transform-origin:left center;">Example of sparklines</div></div>
<div style="left:40.80px;top:137.96px;width:394.40px;height:11.78px;background:#e2efda;"></div>
<div style="left:40.80px;top:161.52px;width:394.40px;height:11.78px;background:#e2efda;"></div>
<div style="left:40.80px;top:185.08px;width:394.40px;height:11.78px;background:#e2efda;"></div>
<div style="left:40.80px;top:208.64px;width:394.40px;height:11.78px;background:#e2efda;"></div>
<div style="left:40.80px;top:232.20px;width:394.40px;height:11.78px;background:#e2efda;"></div>
<div style="left:40.80px;top:137.46px;width:394.40px;height:1.00px;background:#a9d08e"></div>
<div style="left:40.80px;top:149.24px;width:394.40px;height:1.00px;background:#a9d08e"></div>
<div style="left:40.80px;top:161.02px;width:394.40px;height:1.00px;background:#a9d08e"></div>
<div style="left:40.80px;top:172.80px;width:394.40px;height:1.00px;background:#a9d08e"></div>
<div style="left:40.80px;top:184.58px;width:394.40px;height:1.00px;background:#a9d08e"></div>
<div style="left:40.80px;top:196.36px;width:394.40px;height:1.00px;background:#a9d08e"></div>
<div style="left:40.80px;top:208.14px;width:394.40px;height:1.00px;background:#a9d08e"></div>
<div style="left:40.80px;top:219.92px;width:394.40px;height:1.00px;background:#a9d08e"></div>
<div style="left:40.80px;top:231.70px;width:394.40px;height:1.00px;background:#a9d08e"></div>
<div style="left:40.80px;top:243.48px;width:394.40px;height:1.00px;background:#a9d08e"></div>
<div style="left:40.80px;top:255.26px;width:394.40px;height:1.00px;background:#a9d08e"></div>
<div style="left:139.90px;top:126.18px;width:1.00px;height:129.58px;background:#a9d08e"></div>
<div style="left:213.20px;top:126.18px;width:1.00px;height:129.58px;background:#a9d08e"></div>
<div style="left:286.90px;top:126.18px;width:1.00px;height:129.58px;background:#a9d08e"></div>
<div style="left:361.30px;top:126.18px;width:1.00px;height:129.58px;background:#a9d08e"></div>
<div style="left:434.70px;top:126.18px;width:1.00px;height:129.58px;background:#a9d08e"></div>
<div style="left:40.50px;top:126.18px;width:0.80px;height:141.36px;background:#a9d08e"></div>
<div style="left:40.80px;top:137.16px;width:394.40px;height:1.30px;background:#70ad47"></div>
<div style="left:40.80px;top:254.76px;width:394.40px;height:1.60px;background:#4f9d3a"></div>
<div style="left:40.80px;top:126.18px;width:99.60px;height:11.78px;"><div class="c" style="left:0;right:0;top:0.00px;height:11.78px;line-height:14.38px;font-size:8.33px;color:#000;font-weight:bold;text-align:left;padding:0 1.8px;transform:scaleX(.93);transform-origin:left center;">Item</div></div>
<div style="left:130.20px;top:127.28px;width:9.40px;height:9.30px;background:#fff;border:0.7px solid #d8d8d8"></div>
<svg style="left:132.50px;top:130.78px" width="4.8" height="2.7" viewBox="0 0 8 4.6"><path d="M0 0 H8 L4 4.6 Z" fill="#6e6e6e"/></svg>
<div style="left:140.40px;top:126.18px;width:73.30px;height:11.78px;"><div class="c" style="left:0;right:0;top:0.00px;height:11.78px;line-height:14.38px;font-size:8.33px;color:#000;font-weight:bold;text-align:left;padding:0 1.8px;transform:scaleX(.93);transform-origin:left center;">Sum for Q1</div></div>
<div style="left:203.50px;top:127.28px;width:9.40px;height:9.30px;background:#fff;border:0.7px solid #d8d8d8"></div>
<svg style="left:205.80px;top:130.78px" width="4.8" height="2.7" viewBox="0 0 8 4.6"><path d="M0 0 H8 L4 4.6 Z" fill="#6e6e6e"/></svg>
<div style="left:213.70px;top:126.18px;width:73.70px;height:11.78px;"><div class="c" style="left:0;right:0;top:0.00px;height:11.78px;line-height:14.38px;font-size:8.33px;color:#000;font-weight:bold;text-align:left;padding:0 3.4px;transform:scaleX(.93);transform-origin:left center;">Sum for Q2</div></div>
<div style="left:277.20px;top:127.28px;width:9.40px;height:9.30px;background:#fff;border:0.7px solid #d8d8d8"></div>
<svg style="left:279.50px;top:130.78px" width="4.8" height="2.7" viewBox="0 0 8 4.6"><path d="M0 0 H8 L4 4.6 Z" fill="#6e6e6e"/></svg>
<div style="left:287.40px;top:126.18px;width:74.40px;height:11.78px;"><div class="c" style="left:0;right:0;top:0.00px;height:11.78px;line-height:14.38px;font-size:8.33px;color:#000;font-weight:bold;text-align:left;padding:0 1.8px;transform:scaleX(.93);transform-origin:left center;">Sum for Q3</div></div>
<div style="left:351.60px;top:127.28px;width:9.40px;height:9.30px;background:#fff;border:0.7px solid #d8d8d8"></div>
<svg style="left:353.90px;top:130.78px" width="4.8" height="2.7" viewBox="0 0 8 4.6"><path d="M0 0 H8 L4 4.6 Z" fill="#6e6e6e"/></svg>
<div style="left:361.80px;top:126.18px;width:73.40px;height:11.78px;"><div class="c" style="left:0;right:0;top:0.00px;height:11.78px;line-height:14.38px;font-size:8.33px;color:#000;font-weight:bold;text-align:left;padding:0 1.8px;transform:scaleX(.93);transform-origin:left center;">Sum for Q4</div></div>
<div style="left:425.00px;top:127.28px;width:9.40px;height:9.30px;background:#fff;border:0.7px solid #d8d8d8"></div>
<svg style="left:427.30px;top:130.78px" width="4.8" height="2.7" viewBox="0 0 8 4.6"><path d="M0 0 H8 L4 4.6 Z" fill="#6e6e6e"/></svg>
<div style="left:40.80px;top:137.96px;width:99.60px;height:11.78px;"><div class="c" style="left:0;right:0;top:0.00px;height:11.78px;line-height:14.38px;font-size:8.25px;color:#000;font-weight:normal;text-align:left;padding:0 1.6px;">Australian lamb</div></div>
<div class="c" style="left:144.80px;top:137.96px;line-height:14.38px;font-size:8.25px;font-weight:normal">$</div>
<div class="c" style="left:140.40px;width:70.00px;top:137.96px;line-height:14.38px;font-size:8.25px;text-align:right;font-weight:normal;">2,667.60</div>
<div class="c" style="left:218.10px;top:137.96px;line-height:14.38px;font-size:8.25px;font-weight:normal">$</div>
<div class="c" style="left:213.70px;width:70.40px;top:137.96px;line-height:14.38px;font-size:8.25px;text-align:right;font-weight:normal;">4,013.10</div>
<div class="c" style="left:291.80px;top:137.96px;line-height:14.38px;font-size:8.25px;font-weight:normal">$</div>
<div class="c" style="left:287.40px;width:71.10px;top:137.96px;line-height:14.38px;font-size:8.25px;text-align:right;font-weight:normal;">4,836.00</div>
<div class="c" style="left:366.20px;top:137.96px;line-height:14.38px;font-size:8.25px;font-weight:normal">$</div>
<div class="c" style="left:361.80px;width:70.10px;top:137.96px;line-height:14.38px;font-size:8.25px;text-align:right;font-weight:normal;">6,087.90</div>
<div style="left:40.80px;top:149.74px;width:99.60px;height:11.78px;"><div class="c" style="left:0;right:0;top:0.00px;height:11.78px;line-height:14.38px;font-size:8.25px;color:#000;font-weight:normal;text-align:left;padding:0 1.6px;">Pacific crabs</div></div>
<div class="c" style="left:144.80px;top:149.74px;line-height:14.38px;font-size:8.25px;font-weight:normal">$</div>
<div class="c" style="left:140.40px;width:70.00px;top:149.74px;line-height:14.38px;font-size:8.25px;text-align:right;font-weight:normal;">1,768.41</div>
<div class="c" style="left:218.10px;top:149.74px;line-height:14.38px;font-size:8.25px;font-weight:normal">$</div>
<div class="c" style="left:213.70px;width:70.40px;top:149.74px;line-height:14.38px;font-size:8.25px;text-align:right;font-weight:normal;">1,978.00</div>
<div class="c" style="left:291.80px;top:149.74px;line-height:14.38px;font-size:8.25px;font-weight:normal">$</div>
<div class="c" style="left:287.40px;width:71.10px;top:149.74px;line-height:14.38px;font-size:8.25px;text-align:right;font-weight:normal;">4,412.32</div>
<div class="c" style="left:366.20px;top:149.74px;line-height:14.38px;font-size:8.25px;font-weight:normal">$</div>
<div class="c" style="left:361.80px;width:70.10px;top:149.74px;line-height:14.38px;font-size:8.25px;text-align:right;font-weight:normal;">1,656.00</div>
<div style="left:40.80px;top:161.52px;width:99.60px;height:11.78px;"><div class="c" style="left:0;right:0;top:0.00px;height:11.78px;line-height:14.38px;font-size:8.25px;color:#000;font-weight:normal;text-align:left;padding:0 1.6px;">Camembert</div></div>
<div class="c" style="left:144.80px;top:161.52px;line-height:14.38px;font-size:8.25px;font-weight:normal">$</div>
<div class="c" style="left:140.40px;width:70.00px;top:161.52px;line-height:14.38px;font-size:8.25px;text-align:right;font-weight:normal;">3,182.40</div>
<div class="c" style="left:218.10px;top:161.52px;line-height:14.38px;font-size:8.25px;font-weight:normal">$</div>
<div class="c" style="left:213.70px;width:70.40px;top:161.52px;line-height:14.38px;font-size:8.25px;text-align:right;font-weight:normal;">4,683.50</div>
<div class="c" style="left:291.80px;top:161.52px;line-height:14.38px;font-size:8.25px;font-weight:normal">$</div>
<div class="c" style="left:287.40px;width:71.10px;top:161.52px;line-height:14.38px;font-size:8.25px;text-align:right;font-weight:normal;">9,579.50</div>
<div class="c" style="left:366.20px;top:161.52px;line-height:14.38px;font-size:8.25px;font-weight:normal">$</div>
<div class="c" style="left:361.80px;width:70.10px;top:161.52px;line-height:14.38px;font-size:8.25px;text-align:right;font-weight:normal;">3,060.00</div>
<div style="left:40.80px;top:173.30px;width:99.60px;height:11.78px;"><div class="c" style="left:0;right:0;top:0.00px;height:11.78px;line-height:14.38px;font-size:8.25px;color:#000;font-weight:normal;text-align:left;padding:0 1.6px;">Brazilian coffee</div></div>
<div class="c" style="left:144.80px;top:173.30px;line-height:14.38px;font-size:8.25px;font-weight:normal">$</div>
<div class="c" style="left:140.40px;width:70.00px;top:173.30px;line-height:14.38px;font-size:8.25px;text-align:right;font-weight:normal;">1,398.40</div>
<div class="c" style="left:218.10px;top:173.30px;line-height:14.38px;font-size:8.25px;font-weight:normal">$</div>
<div class="c" style="left:213.70px;width:70.40px;top:173.30px;line-height:14.38px;font-size:8.25px;text-align:right;font-weight:normal;">4,496.50</div>
<div class="c" style="left:291.80px;top:173.30px;line-height:14.38px;font-size:8.25px;font-weight:normal">$</div>
<div class="c" style="left:287.40px;width:71.10px;top:173.30px;line-height:14.38px;font-size:8.25px;text-align:right;font-weight:normal;">1,196.00</div>
<div class="c" style="left:366.20px;top:173.30px;line-height:14.38px;font-size:8.25px;font-weight:normal">$</div>
<div class="c" style="left:361.80px;width:70.10px;top:173.30px;line-height:14.38px;font-size:8.25px;text-align:right;font-weight:normal;">3,979.00</div>
<div style="left:40.80px;top:185.08px;width:99.60px;height:11.78px;"><div class="c" style="left:0;right:0;top:0.00px;height:11.78px;line-height:14.38px;font-size:8.25px;color:#000;font-weight:normal;text-align:left;padding:0 1.6px;">Loisiana sauce</div></div>
<div class="c" style="left:144.80px;top:185.08px;line-height:14.38px;font-size:8.25px;font-weight:normal">$</div>
<div class="c" style="left:140.40px;width:70.00px;top:185.08px;line-height:14.38px;font-size:8.25px;text-align:right;font-weight:normal;">1,347.36</div>
<div class="c" style="left:218.10px;top:185.08px;line-height:14.38px;font-size:8.25px;font-weight:normal">$</div>
<div class="c" style="left:213.70px;width:70.40px;top:185.08px;line-height:14.38px;font-size:8.25px;text-align:right;font-weight:normal;">2,750.69</div>
<div class="c" style="left:291.80px;top:185.08px;line-height:14.38px;font-size:8.25px;font-weight:normal">$</div>
<div class="c" style="left:287.40px;width:71.10px;top:185.08px;line-height:14.38px;font-size:8.25px;text-align:right;font-weight:normal;">1,375.62</div>
<div class="c" style="left:366.20px;top:185.08px;line-height:14.38px;font-size:8.25px;font-weight:normal">$</div>
<div class="c" style="left:361.80px;width:70.10px;top:185.08px;line-height:14.38px;font-size:8.25px;text-align:right;font-weight:normal;">3,899.51</div>
<div style="left:40.80px;top:196.86px;width:99.60px;height:11.78px;"><div class="c" style="left:0;right:0;top:0.00px;height:11.78px;line-height:14.38px;font-size:8.25px;color:#000;font-weight:normal;text-align:left;padding:0 1.6px;">Marinated pepper</div></div>
<div class="c" style="left:144.80px;top:196.86px;line-height:14.38px;font-size:8.25px;font-weight:normal">$</div>
<div class="c" style="left:140.40px;width:70.00px;top:196.86px;line-height:14.38px;font-size:8.25px;text-align:right;font-weight:normal;">1,509.60</div>
<div class="c" style="left:218.10px;top:196.86px;line-height:14.38px;font-size:8.25px;font-weight:normal">$</div>
<div class="c" style="left:213.70px;width:70.40px;top:196.86px;line-height:14.38px;font-size:8.25px;text-align:right;font-weight:normal;">530.40</div>
<div class="c" style="left:291.80px;top:196.86px;line-height:14.38px;font-size:8.25px;font-weight:normal">$</div>
<div class="c" style="left:287.40px;width:71.10px;top:196.86px;line-height:14.38px;font-size:8.25px;text-align:right;font-weight:normal;">68.00</div>
<div class="c" style="left:366.20px;top:196.86px;line-height:14.38px;font-size:8.25px;font-weight:normal">$</div>
<div class="c" style="left:361.80px;width:70.10px;top:196.86px;line-height:14.38px;font-size:8.25px;text-align:right;font-weight:normal;">850.00</div>
<div style="left:40.80px;top:208.64px;width:99.60px;height:11.78px;"><div class="c" style="left:0;right:0;top:0.00px;height:11.78px;line-height:14.38px;font-size:8.25px;color:#000;font-weight:normal;text-align:left;padding:0 1.6px;">Mozzarella</div></div>
<div class="c" style="left:144.80px;top:208.64px;line-height:14.38px;font-size:8.25px;font-weight:normal">$</div>
<div class="c" style="left:140.40px;width:70.00px;top:208.64px;line-height:14.38px;font-size:8.25px;text-align:right;font-weight:normal;">1,390.00</div>
<div class="c" style="left:218.10px;top:208.64px;line-height:14.38px;font-size:8.25px;font-weight:normal">$</div>
<div class="c" style="left:213.70px;width:70.40px;top:208.64px;line-height:14.38px;font-size:8.25px;text-align:right;font-weight:normal;">4,488.20</div>
<div class="c" style="left:291.80px;top:208.64px;line-height:14.38px;font-size:8.25px;font-weight:normal">$</div>
<div class="c" style="left:287.40px;width:71.10px;top:208.64px;line-height:14.38px;font-size:8.25px;text-align:right;font-weight:normal;">3,027.60</div>
<div class="c" style="left:366.20px;top:208.64px;line-height:14.38px;font-size:8.25px;font-weight:normal">$</div>
<div class="c" style="left:361.80px;width:70.10px;top:208.64px;line-height:14.38px;font-size:8.25px;text-align:right;font-weight:normal;">2,697.00</div>
<div style="left:40.80px;top:220.42px;width:99.60px;height:11.78px;"><div class="c" style="left:0;right:0;top:0.00px;height:11.78px;line-height:14.38px;font-size:8.25px;color:#000;font-weight:normal;text-align:left;padding:0 1.6px;">Lavash</div></div>
<div class="c" style="left:144.80px;top:220.42px;line-height:14.38px;font-size:8.25px;font-weight:normal">$</div>
<div class="c" style="left:140.40px;width:70.00px;top:220.42px;line-height:14.38px;font-size:8.25px;text-align:right;font-weight:normal;">1,462.00</div>
<div class="c" style="left:218.10px;top:220.42px;line-height:14.38px;font-size:8.25px;font-weight:normal">$</div>
<div class="c" style="left:213.70px;width:70.40px;top:220.42px;line-height:14.38px;font-size:8.25px;text-align:right;font-weight:normal;">644.00</div>
<div class="c" style="left:291.80px;top:220.42px;line-height:14.38px;font-size:8.25px;font-weight:normal">$</div>
<div class="c" style="left:287.40px;width:71.10px;top:220.42px;line-height:14.38px;font-size:8.25px;text-align:right;font-weight:normal;">1,733.00</div>
<div class="c" style="left:366.20px;top:220.42px;line-height:14.38px;font-size:8.25px;font-weight:normal">$</div>
<div class="c" style="left:361.80px;width:70.10px;top:220.42px;line-height:14.38px;font-size:8.25px;text-align:right;font-weight:normal;">1,434.00</div>
<div style="left:40.80px;top:232.20px;width:99.60px;height:11.78px;"><div class="c" style="left:0;right:0;top:0.00px;height:11.78px;line-height:14.38px;font-size:8.25px;color:#000;font-weight:normal;text-align:left;padding:0 1.6px;">Scotch whisky</div></div>
<div class="c" style="left:144.80px;top:232.20px;line-height:14.38px;font-size:8.25px;font-weight:normal">$</div>
<div class="c" style="left:140.40px;width:70.00px;top:232.20px;line-height:14.38px;font-size:8.25px;text-align:right;font-weight:normal;">1,310.40</div>
<div class="c" style="left:218.10px;top:232.20px;line-height:14.38px;font-size:8.25px;font-weight:normal">$</div>
<div class="c" style="left:213.70px;width:70.40px;top:232.20px;line-height:14.38px;font-size:8.25px;text-align:right;font-weight:normal;">1,368.00</div>
<div class="c" style="left:291.80px;top:232.20px;line-height:14.38px;font-size:8.25px;font-weight:normal">$</div>
<div class="c" style="left:287.40px;width:71.10px;top:232.20px;line-height:14.38px;font-size:8.25px;text-align:right;font-weight:normal;">1,323.00</div>
<div class="c" style="left:366.20px;top:232.20px;line-height:14.38px;font-size:8.25px;font-weight:normal">$</div>
<div class="c" style="left:361.80px;width:70.10px;top:232.20px;line-height:14.38px;font-size:8.25px;text-align:right;font-weight:normal;">1,273.50</div>
<div style="left:40.80px;top:243.98px;width:99.60px;height:11.78px;"><div class="c" style="left:0;right:0;top:0.00px;height:11.78px;line-height:14.38px;font-size:8.25px;color:#000;font-weight:normal;text-align:left;padding:0 1.6px;">Cherry jam</div></div>
<div class="c" style="left:144.80px;top:243.98px;line-height:14.38px;font-size:8.25px;font-weight:normal">$</div>
<div class="c" style="left:140.40px;width:70.00px;top:243.98px;line-height:14.38px;font-size:8.25px;text-align:right;font-weight:normal;">3,202.87</div>
<div class="c" style="left:218.10px;top:243.98px;line-height:14.38px;font-size:8.25px;font-weight:normal">$</div>
<div class="c" style="left:213.70px;width:70.40px;top:243.98px;line-height:14.38px;font-size:8.25px;text-align:right;font-weight:normal;">263.40</div>
<div class="c" style="left:291.80px;top:243.98px;line-height:14.38px;font-size:8.25px;font-weight:normal">$</div>
<div class="c" style="left:287.40px;width:71.10px;top:243.98px;line-height:14.38px;font-size:8.25px;text-align:right;font-weight:normal;">842.88</div>
<div class="c" style="left:366.20px;top:243.98px;line-height:14.38px;font-size:8.25px;font-weight:normal">$</div>
<div class="c" style="left:361.80px;width:70.10px;top:243.98px;line-height:14.38px;font-size:8.25px;text-align:right;font-weight:normal;">2,590.10</div>
<div style="left:40.80px;top:255.76px;width:99.60px;height:11.78px;"><div class="c" style="left:0;right:0;top:0.00px;height:11.78px;line-height:14.38px;font-size:8.6px;color:#000;font-weight:bold;text-align:left;padding:0 1.6px;transform:scaleX(.93);transform-origin:left center;">Total</div></div>
<div style="left:140.40px;top:255.76px;width:73.30px;height:11.78px;background:#f8696b;"></div>
<div class="c" style="left:144.80px;top:255.76px;line-height:14.38px;font-size:8.25px;font-weight:bold">$</div>
<div class="c" style="left:140.40px;width:70.00px;top:255.76px;line-height:14.38px;font-size:8.75px;text-align:right;font-weight:bold;transform:scaleX(.94);transform-origin:right center;">19,239.04</div>
<div style="left:213.70px;top:255.76px;width:73.70px;height:11.78px;background:#fcb47e;"></div>
<div class="c" style="left:218.10px;top:255.76px;line-height:14.38px;font-size:8.25px;font-weight:bold">$</div>
<div class="c" style="left:213.70px;width:70.40px;top:255.76px;line-height:14.38px;font-size:8.75px;text-align:right;font-weight:bold;transform:scaleX(.94);transform-origin:right center;">25,215.79</div>
<div style="left:287.40px;top:255.76px;width:74.40px;height:11.78px;background:#63be7b;"></div>
<div class="c" style="left:291.80px;top:255.76px;line-height:14.38px;font-size:8.25px;font-weight:bold">$</div>
<div class="c" style="left:287.40px;width:71.10px;top:255.76px;line-height:14.38px;font-size:8.75px;text-align:right;font-weight:bold;transform:scaleX(.94);transform-origin:right center;">28,393.92</div>
<div style="left:361.80px;top:255.76px;width:73.40px;height:11.78px;background:#ffe583;"></div>
<div class="c" style="left:366.20px;top:255.76px;line-height:14.38px;font-size:8.25px;font-weight:bold">$</div>
<div class="c" style="left:361.80px;width:70.10px;top:255.76px;line-height:14.38px;font-size:8.75px;text-align:right;font-weight:bold;transform:scaleX(.94);transform-origin:right center;">27,527.01</div>
<div style="left:40.80px;top:254.76px;width:394.40px;height:1.60px;background:#4f9d3a"></div>
<div style="left:40.80px;top:267.04px;width:394.40px;height:1.00px;background:#a9d08e"></div>
<svg style="left:432.00px;top:264.34px" width="3" height="3" viewBox="0 0 3 3"><path d="M3 0 V3 H0 Z" fill="#2f5597"/></svg>
<div style="left:286.60px;top:137.16px;width:75.80px;height:13.18px;border:1.2px solid #3d7a57"></div>
<div style="left:359.90px;top:147.84px;width:3.90px;height:3.90px;background:#fff"></div>
<div style="left:360.50px;top:148.44px;width:3.00px;height:3.00px;background:#3d7a57"></div>
<div style="left:502.80px;top:147.74px;width:17.40px;height:0.80px;background:#ff5b5b"></div>
<div style="left:524.40px;top:144.84px;width:17.60px;height:3.70px;background:#00b050"></div>
<div style="left:547.00px;top:142.14px;width:17.30px;height:6.40px;background:#00b050"></div>
<div style="left:568.80px;top:139.24px;width:17.40px;height:9.30px;background:#00b050"></div>
<div style="left:502.80px;top:159.32px;width:17.40px;height:1.00px;background:#ffd978"></div>
<div style="left:524.40px;top:158.72px;width:17.60px;height:1.60px;background:#4fc383"></div>
<div style="left:547.00px;top:152.02px;width:17.30px;height:8.30px;background:#00b050"></div>
<div style="left:568.80px;top:159.42px;width:17.40px;height:0.90px;background:#ff5b5b"></div>
<div style="left:502.80px;top:171.00px;width:17.40px;height:1.10px;background:#ffd978"></div>
<div style="left:524.40px;top:169.70px;width:17.60px;height:2.40px;background:#00b050"></div>
<div style="left:547.00px;top:163.60px;width:17.30px;height:8.50px;background:#00b050"></div>
<div style="left:568.80px;top:170.80px;width:17.40px;height:1.30px;background:#ff8f8f"></div>
<div style="left:502.80px;top:182.78px;width:17.40px;height:1.10px;background:#ffd978"></div>
<div style="left:524.40px;top:175.08px;width:17.60px;height:8.80px;background:#00b050"></div>
<div style="left:547.00px;top:182.78px;width:17.30px;height:1.10px;background:#ff8f8f"></div>
<div style="left:568.80px;top:176.88px;width:17.40px;height:7.00px;background:#ffc000"></div>
<div style="left:502.80px;top:194.76px;width:17.40px;height:0.90px;background:#ff5b5b"></div>
<div style="left:524.40px;top:190.86px;width:17.60px;height:4.80px;background:#00b050"></div>
<div style="left:547.00px;top:194.76px;width:17.30px;height:0.90px;background:#4fc383"></div>
<div style="left:568.80px;top:187.86px;width:17.40px;height:7.80px;background:#00b050"></div>
<div style="left:502.80px;top:198.94px;width:17.40px;height:8.50px;background:#00b050"></div>
<div style="left:524.40px;top:204.54px;width:17.60px;height:2.90px;background:#00b050"></div>
<div style="left:547.00px;top:206.54px;width:17.30px;height:0.90px;background:#ff5b5b"></div>
<div style="left:568.80px;top:202.94px;width:17.40px;height:4.50px;background:#ffc000"></div>
<div style="left:502.80px;top:218.12px;width:17.40px;height:1.10px;background:#ff8f8f"></div>
<div style="left:524.40px;top:210.72px;width:17.60px;height:8.50px;background:#00b050"></div>
<div style="left:547.00px;top:214.42px;width:17.30px;height:4.80px;background:#00b050"></div>
<div style="left:568.80px;top:215.52px;width:17.40px;height:3.70px;background:#ffc000"></div>
<div style="left:502.80px;top:224.10px;width:17.40px;height:6.90px;background:#ffc000"></div>
<div style="left:524.40px;top:229.60px;width:17.60px;height:1.40px;background:#ff8f8f"></div>
<div style="left:547.00px;top:222.50px;width:17.30px;height:8.50px;background:#00b050"></div>
<div style="left:568.80px;top:224.90px;width:17.40px;height:6.10px;background:#ffc000"></div>
<div style="left:502.80px;top:238.98px;width:17.40px;height:3.80px;background:#ffc000"></div>
<div style="left:524.40px;top:233.98px;width:17.60px;height:8.80px;background:#00b050"></div>
<div style="left:547.00px;top:237.98px;width:17.30px;height:4.80px;background:#00b050"></div>
<div style="left:568.80px;top:241.88px;width:17.40px;height:0.90px;background:#ff5b5b"></div>
<div style="left:502.80px;top:245.46px;width:17.40px;height:9.10px;background:#00b050"></div>
<div style="left:524.40px;top:253.66px;width:17.60px;height:0.90px;background:#ff5b5b"></div>
<div style="left:547.00px;top:252.66px;width:17.30px;height:1.90px;background:#00b050"></div>
<div style="left:568.80px;top:247.06px;width:17.40px;height:7.50px;background:#ffc000"></div>
<div style="left:40.80px;top:279.02px;width:99.60px;height:59.40px;background:#00b050"></div>
<div style="left:140.40px;top:279.02px;width:295.60px;height:59.70px;background:linear-gradient(180deg,#b1d7a1 0%,#a4ce90 45%,#9bc886 100%);border:0.7px solid #8fc079"></div>
<div style="left:213.35px;top:279.72px;width:0.70px;height:58.30px;background:rgba(110,150,90,.13)"></div>
<div style="left:287.05px;top:279.72px;width:0.70px;height:58.30px;background:rgba(110,150,90,.13)"></div>
<div style="left:361.45px;top:279.72px;width:0.70px;height:58.30px;background:rgba(110,150,90,.13)"></div>
<div style="left:141.00px;top:290.75px;width:294.20px;height:0.70px;background:rgba(110,150,90,.11)"></div>
<div style="left:141.00px;top:302.53px;width:294.20px;height:0.70px;background:rgba(110,150,90,.11)"></div>
<div style="left:141.00px;top:314.31px;width:294.20px;height:0.70px;background:rgba(110,150,90,.11)"></div>
<div style="left:141.00px;top:326.09px;width:294.20px;height:0.70px;background:rgba(110,150,90,.11)"></div>
<div class="c" style="left:77.40px;top:304.80px;width:0;height:0;"><div class="c" style="left:-40px;top:-5px;width:80px;height:10px;line-height:10px;text-align:center;font-size:8.4px;font-weight:bold;color:#fff;transform:rotate(-90deg)">Example</div></div>
<div class="c" style="left:92.00px;top:303.80px;width:0;height:0;"><div class="c" style="left:-40px;top:-5px;width:80px;height:10px;line-height:10px;text-align:center;font-size:8.5px;font-weight:bold;color:#fff;transform:rotate(-90deg)">of an</div></div>
<div class="c" style="left:105.60px;top:304.90px;width:0;height:0;"><div class="c" style="left:-40px;top:-5px;width:80px;height:10px;line-height:10px;text-align:center;font-size:8.7px;font-weight:bold;color:#fff;transform:rotate(-90deg)">autoshape</div></div>
<div class="c" style="left:118.80px;top:308.70px;width:0;height:0;"><div class="c" style="left:-40px;top:-5px;width:80px;height:10px;line-height:10px;text-align:center;font-size:8.4px;font-weight:bold;color:#fff;transform:rotate(-90deg)">(B15:E19) and</div></div>
<div class="c" style="left:132.20px;top:305.20px;width:0;height:0;"><div class="c" style="left:-40px;top:-5px;width:80px;height:10px;line-height:10px;text-align:center;font-size:9.0px;font-weight:bold;color:#fff;transform:rotate(-90deg)">vertical text</div></div>
<div class="c" style="left:146.5px;top:283.00px;font-size:8.56px;line-height:11px;font-weight:bold;transform:scaleX(.93);transform-origin:left center">Above is an example of the conditional formatting:</div>
<div class="c" style="left:148.8px;top:293.95px;font-size:8.25px;line-height:11px;font-weight:normal">for values less than 20 000, the cell acquires red color;</div>
<div class="c" style="left:148.8px;top:304.90px;font-size:8.25px;line-height:11px;font-weight:normal">for values higher than 28 000 - green;</div>
<div class="c" style="left:148.8px;top:315.85px;font-size:8.25px;line-height:11px;font-weight:normal">if values are in this range, cells are colored in yellow.</div>
<div style="left:40.80px;top:350.00px;width:394.40px;height:11.78px;background:#00b050;"></div>
<div style="left:40.80px;top:350.00px;width:99.60px;height:11.78px;"><div class="c" style="left:0;right:0;top:0.00px;height:11.78px;line-height:14.38px;font-size:8.45px;color:#fff;font-weight:normal;text-align:left;padding:0 1.6px;">Example of an equation</div></div>
<div style="left:287.40px;top:350.00px;width:74.40px;height:11.78px;"><div class="c" style="left:0;right:0;top:0.00px;height:11.78px;line-height:14.38px;font-size:8.54px;color:#fff;font-weight:bold;text-align:left;padding:0 1.6px;transform:scaleX(.93);transform-origin:left center;">Current date</div></div>
<div style="left:361.80px;top:350.00px;width:73.40px;height:11.78px;"><div class="c" style="left:0;right:0;top:0.00px;height:11.78px;line-height:14.38px;font-size:8.54px;color:#fff;font-weight:bold;text-align:left;padding:0 1.6px;transform:scaleX(.93);transform-origin:left center;">Current time</div></div>
<div style="left:40.80px;top:361.78px;width:246.60px;height:23.56px;background:#c6e0b4;"></div>
<div class="c" style="left:287.4px;width:73.00px;top:370.28px;text-align:right;font-size:10.9px;line-height:14px">9/30/2024</div>
<div class="c" style="left:361.8px;width:71.80px;top:370.48px;text-align:right;font-size:10.45px;line-height:14px">4:06:39 PM</div>
<div class="t" style="left:85.90px;top:368.27px;font-family:'Liberation Serif',serif;font-size:9.2px;line-height:11.04px;color:#000;-webkit-text-stroke:0.18px #000;font-style:italic;">e</div>
<div class="t" style="left:90.30px;top:366.71px;font-family:'Liberation Serif',serif;font-size:6.6px;line-height:7.92px;color:#000;-webkit-text-stroke:0.18px #000;font-style:italic;">x</div>
<div class="t" style="left:98.20px;top:367.90px;font-family:'Liberation Serif',serif;font-size:9.6px;line-height:11.52px;color:#000;-webkit-text-stroke:0.18px #000;">=</div>
<div class="t" style="left:106.90px;top:368.27px;font-family:'Liberation Serif',serif;font-size:9.2px;line-height:11.04px;color:#000;-webkit-text-stroke:0.18px #000;">1</div>
<div class="t" style="left:114.10px;top:367.90px;font-family:'Liberation Serif',serif;font-size:9.6px;line-height:11.52px;color:#000;-webkit-text-stroke:0.18px #000;">+</div>
<div style="left:122.10px;top:374.00px;width:7.70px;height:0.75px;background:#000"></div>
<div class="t" style="left:123.65px;top:362.27px;font-family:'Liberation Serif',serif;font-size:9.2px;line-height:11.04px;color:#000;-webkit-text-stroke:0.18px #000;font-style:italic;">x</div>
<div class="t" style="left:122.35px;top:374.76px;font-family:'Liberation Serif',serif;font-size:9.0px;line-height:10.80px;color:#000;-webkit-text-stroke:0.18px #000;">1!</div>
<div class="t" style="left:132.10px;top:367.90px;font-family:'Liberation Serif',serif;font-size:9.6px;line-height:11.52px;color:#000;-webkit-text-stroke:0.18px #000;">+</div>
<div style="left:140.00px;top:374.00px;width:9.70px;height:0.75px;background:#000"></div>
<div class="t" style="left:140.50px;top:362.27px;font-family:'Liberation Serif',serif;font-size:9.2px;line-height:11.04px;color:#000;-webkit-text-stroke:0.18px #000;font-style:italic;">x</div>
<div class="t" style="left:146.00px;top:362.00px;font-family:'Liberation Serif',serif;font-size:6.4px;line-height:7.68px;color:#000;-webkit-text-stroke:0.18px #000;">2</div>
<div class="t" style="left:141.25px;top:374.76px;font-family:'Liberation Serif',serif;font-size:9.0px;line-height:10.80px;color:#000;-webkit-text-stroke:0.18px #000;">2!</div>
<div class="t" style="left:151.70px;top:367.90px;font-family:'Liberation Serif',serif;font-size:9.6px;line-height:11.52px;color:#000;-webkit-text-stroke:0.18px #000;">+</div>
<div style="left:159.90px;top:374.00px;width:9.50px;height:0.75px;background:#000"></div>
<div class="t" style="left:160.40px;top:362.27px;font-family:'Liberation Serif',serif;font-size:9.2px;line-height:11.04px;color:#000;-webkit-text-stroke:0.18px #000;font-style:italic;">x</div>
<div class="t" style="left:165.90px;top:362.00px;font-family:'Liberation Serif',serif;font-size:6.4px;line-height:7.68px;color:#000;-webkit-text-stroke:0.18px #000;">3</div>
<div class="t" style="left:161.05px;top:374.76px;font-family:'Liberation Serif',serif;font-size:9.0px;line-height:10.80px;color:#000;-webkit-text-stroke:0.18px #000;">3!</div>
<div class="t" style="left:171.80px;top:367.90px;font-family:'Liberation Serif',serif;font-size:9.6px;line-height:11.52px;color:#000;-webkit-text-stroke:0.18px #000;">+</div>
<div class="t" style="left:180.20px;top:368.27px;font-family:'Liberation Serif',serif;font-size:9.2px;line-height:11.04px;color:#000;-webkit-text-stroke:0.18px #000;">...,</div>
<div class="t" style="left:192.80px;top:367.90px;font-family:'Liberation Serif',serif;font-size:9.6px;line-height:11.52px;color:#000;-webkit-text-stroke:0.18px #000;">−</div>
<div class="t" style="left:198.60px;top:367.90px;font-family:'Liberation Serif',serif;font-size:9.6px;line-height:11.52px;color:#000;-webkit-text-stroke:0.18px #000;">∞</div>
<div class="t" style="left:209.60px;top:367.90px;font-family:'Liberation Serif',serif;font-size:9.6px;line-height:11.52px;color:#000;-webkit-text-stroke:0.18px #000;">&lt;</div>
<div class="t" style="left:218.20px;top:368.27px;font-family:'Liberation Serif',serif;font-size:9.2px;line-height:11.04px;color:#000;-webkit-text-stroke:0.18px #000;font-style:italic;">x</div>
<div class="t" style="left:226.60px;top:367.90px;font-family:'Liberation Serif',serif;font-size:9.6px;line-height:11.52px;color:#000;-webkit-text-stroke:0.18px #000;">&lt;</div>
<div class="t" style="left:234.80px;top:367.90px;font-family:'Liberation Serif',serif;font-size:9.6px;line-height:11.52px;color:#000;-webkit-text-stroke:0.18px #000;">∞</div>
<div style="left:40.80px;top:397.12px;width:99.60px;height:11.78px;background:#00b050;"><div class="c" style="left:0;right:0;top:0.00px;height:11.78px;line-height:14.38px;font-size:8.49px;color:#fff;font-weight:bold;text-align:left;padding:0 1.6px;transform:scaleX(.93);transform-origin:left center;">Example of a comment:</div></div>
<div style="left:140.10px;top:396.72px;width:295.40px;height:12.58px;background:#fff;border:0.8px solid #cfe3c2"></div>
<div class="c" style="left:142.00px;top:397.12px;line-height:14.38px;font-size:8.35px">move the cursor over the cell or click it to display the comment</div>
<svg style="left:431.00px;top:397.32px" width="4" height="4" viewBox="0 0 4 4"><path d="M0 0 H4 V4 Z" fill="#ff8c1a"/></svg>
<div style="left:498.60px;top:267.54px;width:91.10px;height:11.78px;background:#00b050;"><div class="c" style="left:0;right:0;top:0.00px;height:11.78px;line-height:14.38px;font-size:8.6px;color:#fff;font-weight:bold;text-align:left;padding:0 1.6px;transform:scaleX(.93);transform-origin:left center;">Different borders</div></div>
<div style="left:498.20px;top:278.92px;width:92.20px;height:12.78px;background:#fff;border:1.6px solid #3f5c2b"></div>
<div class="c" style="left:500.80px;top:279.32px;line-height:14.38px;font-size:8.3px">Thick box border</div>
<svg style="left:497.60px;top:301.88px" width="93.50" height="14.18"><rect x=".9" y=".8" width="91.20" height="11.98" fill="#fff" stroke="#4b6e38" stroke-width="1.3" stroke-dasharray="4.2 1.4"/></svg>
<div class="c" style="left:500.80px;top:302.88px;line-height:14.38px;font-size:8.3px">Dashed border</div>
<svg style="left:497.60px;top:325.44px" width="93.50" height="14.18"><rect x=".9" y=".8" width="91.20" height="11.98" fill="#fff" stroke="#4b6e38" stroke-width="1.3" stroke-dasharray="4.2 1.4 1.6 1.4"/></svg>
<div class="c" style="left:500.80px;top:326.44px;line-height:14.38px;font-size:8.3px">Dot-and-dash border</div>
<svg style="left:498.20px;top:347.00px" width="92.50" height="30"><path d="M.8 15.3 L91.50 3.1 V13.8 L.8 26.3 Z" fill="#fff" stroke="#4d4d4d" stroke-width=".85"/><path d="M.8 15.3 V26.3 M91.50 3.1 V13.8" fill="none" stroke="#4b7a2e" stroke-width="1.2"/><text x="44.95" y="17.5" font-size="8.2" text-anchor="middle" fill="#000" font-family="Liberation Sans,sans-serif" transform="rotate(-7.2 45.55 15)">Diagonal</text></svg>
<div style="left:498.30px;top:384.94px;width:92.00px;height:24.46px;background:#fff;border:1.25px solid #44632f"></div>
<div style="left:499.60px;top:396.77px;width:89.70px;height:0.70px;background:#dddddd"></div>
<div class="c" style="left:500.80px;top:385.34px;line-height:14.38px;font-size:7.15px;letter-spacing:.2px">Cells, adjacent with</div>
<div class="c" style="left:500.80px;top:397.12px;line-height:14.38px;font-size:7.15px;letter-spacing:.2px">the merged cell</div>
<div style="left:598.20px;top:102.00px;width:9.30px;height:321.10px;background:#e9e9e9"></div>
<div style="left:598.20px;top:99.80px;width:9.30px;height:3.20px;background:#f1f1f1"></div>
<div style="left:598.40px;top:103.20px;width:7.90px;height:8.20px;background:#f3f3f3;border:0.6px solid #dedede"></div>
<svg style="left:600.3px;top:105.9px" width="4" height="2.6" viewBox="0 0 8 5"><path d="M0 5 L4 0 L8 5 Z" fill="#a8a8a8"/></svg>
<div style="left:598.40px;top:406.70px;width:7.90px;height:7.20px;background:#f3f3f3;border:0.6px solid #dedede"></div>
<svg style="left:600.3px;top:409.2px" width="4" height="2.6" viewBox="0 0 8 5"><path d="M0 0 L4 5 L8 0 Z" fill="#a8a8a8"/></svg>
<div style="left:598.40px;top:112.20px;width:7.90px;height:287.00px;background:#f2f2f2;border:0.6px solid #dedede"></div>
<div style="left:600.80px;top:254.40px;width:3.00px;height:0.60px;background:#cfcfcf"></div>
<div style="left:600.80px;top:255.80px;width:3.00px;height:0.60px;background:#cfcfcf"></div>
<div style="left:600.80px;top:257.20px;width:3.00px;height:0.60px;background:#cfcfcf"></div>
<div style="left:24.60px;top:415.10px;width:573.80px;height:8.30px;background:#e6e6e6;border-top:0.7px solid #cbcbcb"></div>
<div style="left:598.20px;top:414.20px;width:9.30px;height:9.20px;background:#e6e6e6"></div>
<div style="left:25.40px;top:415.70px;width:8.00px;height:7.20px;background:#f3f3f3;border:0.6px solid #dedede"></div>
<svg style="left:28.3px;top:417.4px" width="2.6" height="4" viewBox="0 0 5 8"><path d="M5 0 L0 4 L5 8 Z" fill="#adadad"/></svg>
<div style="left:590.20px;top:415.70px;width:7.60px;height:7.20px;background:#f3f3f3;border:0.6px solid #dedede"></div>
<svg style="left:592.8px;top:417.2px" width="2.6" height="4" viewBox="0 0 5 8"><path d="M0 0 L5 4 L0 8 Z" fill="#adadad"/></svg>
<div style="left:34.00px;top:415.70px;width:555.00px;height:7.20px;background:#f2f2f2;border:0.6px solid #dedede"></div>
<div style="left:308.60px;top:418.30px;width:0.60px;height:2.40px;background:#cfcfcf"></div>
<div style="left:310.00px;top:418.30px;width:0.60px;height:2.40px;background:#cfcfcf"></div>
<div style="left:311.40px;top:418.30px;width:0.60px;height:2.40px;background:#cfcfcf"></div>
<div style="left:607.50px;top:75.80px;width:135.60px;height:347.60px;background:#f1f1f1;border-left:0.7px solid #dadada"></div>
<div style="left:743.10px;top:75.80px;width:24.90px;height:347.60px;background:#f1f1f1;border-left:0.7px solid #cbcbcb"></div>
<div class="t" style="left:617.20px;top:81.01px;font-size:6.75px;line-height:8.78px;color:#444;font-weight:bold;">Rows</div>
<div class="t" style="left:677.00px;top:81.01px;font-size:6.75px;line-height:8.78px;color:#444;font-weight:bold;">Columns</div>
<div style="left:617.20px;top:90.80px;width:8.20px;height:8.20px;background:#fff;border:0.7px solid #cfcfcf;border-radius:1.2px"></div>
<svg style="left:618.50px;top:92.20px" width="5.8" height="5.2" viewBox="0 0 10 9"><path d="M1 4.6 L3.9 7.4 L9 1.4" fill="none" stroke="#333" stroke-width="2.1"/></svg>
<div class="t" style="left:630.80px;top:91.11px;font-size:6.75px;line-height:8.78px;color:#444;">Header</div>
<div style="left:617.20px;top:105.40px;width:8.20px;height:8.20px;background:#fff;border:0.7px solid #cfcfcf;border-radius:1.2px"></div>
<svg style="left:618.50px;top:106.80px" width="5.8" height="5.2" viewBox="0 0 10 9"><path d="M1 4.6 L3.9 7.4 L9 1.4" fill="none" stroke="#333" stroke-width="2.1"/></svg>
<div class="t" style="left:630.80px;top:105.71px;font-size:6.75px;line-height:8.78px;color:#444;">Total</div>
<div style="left:617.20px;top:120.00px;width:8.20px;height:8.20px;background:#fff;border:0.7px solid #cfcfcf;border-radius:1.2px"></div>
<svg style="left:618.50px;top:121.40px" width="5.8" height="5.2" viewBox="0 0 10 9"><path d="M1 4.6 L3.9 7.4 L9 1.4" fill="none" stroke="#333" stroke-width="2.1"/></svg>
<div class="t" style="left:630.80px;top:120.31px;font-size:6.75px;line-height:8.78px;color:#444;">Banded</div>
<div style="left:617.20px;top:134.60px;width:8.20px;height:8.20px;background:#fff;border:0.7px solid #cfcfcf;border-radius:1.2px"></div>
<svg style="left:618.50px;top:136.00px" width="5.8" height="5.2" viewBox="0 0 10 9"><path d="M1 4.6 L3.9 7.4 L9 1.4" fill="none" stroke="#333" stroke-width="2.1"/></svg>
<div class="t" style="left:630.80px;top:134.91px;font-size:6.75px;line-height:8.78px;color:#444;">Filter button</div>
<div style="left:677.40px;top:90.80px;width:8.20px;height:8.20px;background:#fff;border:0.7px solid #cfcfcf;border-radius:1.2px"></div>
<div class="t" style="left:691.00px;top:91.11px;font-size:6.75px;line-height:8.78px;color:#444;">First</div>
<div style="left:677.40px;top:105.40px;width:8.20px;height:8.20px;background:#fff;border:0.7px solid #cfcfcf;border-radius:1.2px"></div>
<div class="t" style="left:691.00px;top:105.71px;font-size:6.75px;line-height:8.78px;color:#444;">Last</div>
<div style="left:677.40px;top:120.00px;width:8.20px;height:8.20px;background:#fff;border:0.7px solid #cfcfcf;border-radius:1.2px"></div>
<div class="t" style="left:691.00px;top:120.31px;font-size:6.75px;line-height:8.78px;color:#444;">Banded</div>
<div class="t" style="left:617.20px;top:150.11px;font-size:6.75px;line-height:8.78px;color:#444;font-weight:bold;">Select from template</div>
<div style="left:617.20px;top:158.90px;width:50.90px;height:32.60px;background:#fff;border:0.7px solid #cfcfcf;border-radius:1.2px"></div>
<div style="left:619.40px;top:161.00px;width:38.20px;height:28.50px;background:#a4cf8a"></div>
<div style="left:620.10px;top:161.70px;width:6.54px;height:4.60px;background:#fff;border-radius:.8px"></div>
<div style="left:621.40px;top:163.45px;width:3.84px;height:1.00px;background:#555"></div>
<div style="left:627.74px;top:161.70px;width:6.54px;height:4.60px;background:#fff;border-radius:.8px"></div>
<div style="left:629.04px;top:163.45px;width:3.84px;height:1.00px;background:#555"></div>
<div style="left:635.38px;top:161.70px;width:6.54px;height:4.60px;background:#fff;border-radius:.8px"></div>
<div style="left:636.68px;top:163.45px;width:3.84px;height:1.00px;background:#555"></div>
<div style="left:643.02px;top:161.70px;width:6.54px;height:4.60px;background:#fff;border-radius:.8px"></div>
<div style="left:644.32px;top:163.45px;width:3.84px;height:1.00px;background:#555"></div>
<div style="left:650.66px;top:161.70px;width:6.54px;height:4.60px;background:#fff;border-radius:.8px"></div>
<div style="left:651.96px;top:163.45px;width:3.84px;height:1.00px;background:#555"></div>
<div style="left:620.10px;top:167.40px;width:6.54px;height:4.60px;background:#c9e3b8;border-radius:.8px"></div>
<div style="left:621.40px;top:169.15px;width:3.84px;height:1.00px;background:#555"></div>
<div style="left:627.74px;top:167.40px;width:6.54px;height:4.60px;background:#c9e3b8;border-radius:.8px"></div>
<div style="left:629.04px;top:169.15px;width:3.84px;height:1.00px;background:#555"></div>
<div style="left:635.38px;top:167.40px;width:6.54px;height:4.60px;background:#c9e3b8;border-radius:.8px"></div>
<div style="left:636.68px;top:169.15px;width:3.84px;height:1.00px;background:#555"></div>
<div style="left:643.02px;top:167.40px;width:6.54px;height:4.60px;background:#c9e3b8;border-radius:.8px"></div>
<div style="left:644.32px;top:169.15px;width:3.84px;height:1.00px;background:#555"></div>
<div style="left:650.66px;top:167.40px;width:6.54px;height:4.60px;background:#c9e3b8;border-radius:.8px"></div>
<div style="left:651.96px;top:169.15px;width:3.84px;height:1.00px;background:#555"></div>
<div style="left:620.10px;top:173.10px;width:6.54px;height:4.60px;background:#fff;border-radius:.8px"></div>
<div style="left:621.40px;top:174.85px;width:3.84px;height:1.00px;background:#555"></div>
<div style="left:627.74px;top:173.10px;width:6.54px;height:4.60px;background:#fff;border-radius:.8px"></div>
<div style="left:629.04px;top:174.85px;width:3.84px;height:1.00px;background:#555"></div>
<div style="left:635.38px;top:173.10px;width:6.54px;height:4.60px;background:#fff;border-radius:.8px"></div>
<div style="left:636.68px;top:174.85px;width:3.84px;height:1.00px;background:#555"></div>
<div style="left:643.02px;top:173.10px;width:6.54px;height:4.60px;background:#fff;border-radius:.8px"></div>
<div style="left:644.32px;top:174.85px;width:3.84px;height:1.00px;background:#555"></div>
<div style="left:650.66px;top:173.10px;width:6.54px;height:4.60px;background:#fff;border-radius:.8px"></div>
<div style="left:651.96px;top:174.85px;width:3.84px;height:1.00px;background:#555"></div>
<div style="left:620.10px;top:178.80px;width:6.54px;height:4.60px;background:#c9e3b8;border-radius:.8px"></div>
<div style="left:621.40px;top:180.55px;width:3.84px;height:1.00px;background:#555"></div>
<div style="left:627.74px;top:178.80px;width:6.54px;height:4.60px;background:#c9e3b8;border-radius:.8px"></div>
<div style="left:629.04px;top:180.55px;width:3.84px;height:1.00px;background:#555"></div>
<div style="left:635.38px;top:178.80px;width:6.54px;height:4.60px;background:#c9e3b8;border-radius:.8px"></div>
<div style="left:636.68px;top:180.55px;width:3.84px;height:1.00px;background:#555"></div>
<div style="left:643.02px;top:178.80px;width:6.54px;height:4.60px;background:#c9e3b8;border-radius:.8px"></div>
<div style="left:644.32px;top:180.55px;width:3.84px;height:1.00px;background:#555"></div>
<div style="left:650.66px;top:178.80px;width:6.54px;height:4.60px;background:#c9e3b8;border-radius:.8px"></div>
<div style="left:651.96px;top:180.55px;width:3.84px;height:1.00px;background:#555"></div>
<div style="left:620.10px;top:184.50px;width:6.54px;height:4.60px;background:#fff;border-radius:.8px"></div>
<div style="left:621.40px;top:186.25px;width:3.84px;height:1.00px;background:#555"></div>
<div style="left:627.74px;top:184.50px;width:6.54px;height:4.60px;background:#fff;border-radius:.8px"></div>
<div style="left:629.04px;top:186.25px;width:3.84px;height:1.00px;background:#555"></div>
<div style="left:635.38px;top:184.50px;width:6.54px;height:4.60px;background:#fff;border-radius:.8px"></div>
<div style="left:636.68px;top:186.25px;width:3.84px;height:1.00px;background:#555"></div>
<div style="left:643.02px;top:184.50px;width:6.54px;height:4.60px;background:#fff;border-radius:.8px"></div>
<div style="left:644.32px;top:186.25px;width:3.84px;height:1.00px;background:#555"></div>
<div style="left:650.66px;top:184.50px;width:6.54px;height:4.60px;background:#fff;border-radius:.8px"></div>
<div style="left:651.96px;top:186.25px;width:3.84px;height:1.00px;background:#555"></div>
<svg style="left:660.56px;top:176.76px" width="3.28" height="2.08" viewBox="0 0 10 6.4"><path d="M1 1.1 L5 4.9 L9 1.1" fill="none" stroke="#444" stroke-width="2"/></svg>
<div style="left:617.20px;top:195.60px;width:119.70px;height:0.70px;background:#cbcbcb"></div>
<svg style="left:617.20px;top:201.90px;" width="11.8" height="11.8" viewBox="0 0 20 20"><rect x="7.5" y="5.5" width="5" height="9" fill="none" stroke="#444" stroke-width="1.1" /><rect x="9.4" y="6" width="1.1" height="8" fill="#444" /><rect x="8" y="9.4" width="4" height="1.1" fill="#444" /><path d="M10 1.5 l2 2.5 h-4 z M10 18.5 l2 -2.5 h-4 z M1.5 10 l2.5 -2 v4 z M18.5 10 l-2.5 -2 v4 z" fill="#444" /></svg>
<div class="t" style="left:632.00px;top:204.01px;font-size:6.75px;line-height:8.78px;color:#444;">Resize table</div>
<svg style="left:617.20px;top:219.10px;" width="11.8" height="11.8" viewBox="0 0 20 20"><rect x="2.5" y="3.5" width="15" height="13" fill="none" stroke="#444" stroke-width="1.3" /><rect x="6.85" y="3.5" width="1.3" height="13" fill="#444" /><rect x="11.85" y="3.5" width="1.3" height="13" fill="#444" /><rect x="2.5" y="7.183333333333333" width="15" height="1.3" fill="#444" /><rect x="2.5" y="11.516666666666666" width="15" height="1.3" fill="#444" /><rect x="3" y="4" width="4.6" height="12" fill="#666" /></svg>
<div class="t" style="left:632.00px;top:221.21px;font-size:6.75px;line-height:8.78px;color:#444;">Rows &amp; Columns</div>
<svg style="left:687.86px;top:224.36px" width="3.28" height="2.08" viewBox="0 0 10 6.4"><path d="M1 1.1 L5 4.9 L9 1.1" fill="none" stroke="#444" stroke-width="2"/></svg>
<div style="left:617.20px;top:236.20px;width:119.70px;height:0.70px;background:#cbcbcb"></div>
<div class="t" style="left:617.20px;top:242.51px;font-size:6.75px;line-height:8.78px;color:#444;font-weight:bold;">Table actions</div>
<svg style="left:617.20px;top:257.00px;" width="11.8" height="11.8" viewBox="0 0 20 20"><rect x="2.5" y="3.5" width="5.2" height="13" fill="none" stroke="#444" stroke-width="1.3" /><rect x="12.3" y="3.5" width="5.2" height="13" fill="none" stroke="#444" stroke-width="1.3" /><rect x="3" y="7.6" width="4.2" height="1.2" fill="#444" /><rect x="3" y="11.6" width="4.2" height="1.2" fill="#444" /><rect x="12.8" y="7.6" width="4.2" height="1.2" fill="#444" /><rect x="12.8" y="11.6" width="4.2" height="1.2" fill="#444" /><rect x="3" y="4" width="4.2" height="3.6" fill="#444" /><rect x="12.8" y="12.4" width="4.2" height="3.6" fill="#444" /><circle cx="10" cy="10" r="1.2" fill="#444"/></svg>
<div class="t" style="left:632.00px;top:259.11px;font-size:6.75px;line-height:8.78px;color:#444;">Remove duplicates</div>
<svg style="left:617.20px;top:274.50px;" width="11.8" height="11.8" viewBox="0 0 20 20"><rect x="3.5" y="2.5" width="11" height="8" fill="none" stroke="#444" stroke-width="1.3" /><rect x="4" y="6" width="10" height="1.3" fill="#444" /><rect x="8.4" y="3" width="1.3" height="7" fill="#444" /><rect x="4" y="3" width="4.4" height="3" fill="#444" /><path d="M16.5 11.5 V16.5 H6 M8.7 13.8 L6 16.5 L8.7 19.2" fill="none" stroke="#444" stroke-width="1.3" /></svg>
<div class="t" style="left:632.00px;top:276.61px;font-size:6.75px;line-height:8.78px;color:#444;">Convert to range</div>
<svg style="left:617.20px;top:291.70px;" width="11.8" height="11.8" viewBox="0 0 20 20"><rect x="3.5" y="3.5" width="12" height="10" fill="none" stroke="#444" stroke-width="1.3" /><rect x="4" y="4" width="11" height="3.4" fill="#444" /><rect x="6" y="9.2" width="6" height="1.1" fill="#444" /><rect x="6" y="11.6" width="3.4" height="1.1" fill="#444" /><path d="M9.3 11.3 h9.4 l-3.5 4 v4.2 l-2.4 -1.5 v-2.7 z" fill="#444" /></svg>
<div class="t" style="left:632.00px;top:293.81px;font-size:6.75px;line-height:8.78px;color:#444;">Insert slicer</div>
<svg style="left:617.20px;top:309.10px;" width="11.8" height="11.8" viewBox="0 0 20 20"><rect x="3.5" y="3.5" width="13" height="3.2" fill="none" stroke="#444" stroke-width="1.3" rx="1.4"/><rect x="3.5" y="9.5" width="3.2" height="7.4" fill="none" stroke="#444" stroke-width="1.3" rx="1.4"/><path d="M15.5 9.8 v4.4 h-5 M12.7 11.8 l-2.3 2.4 l2.3 2.4" fill="none" stroke="#444" stroke-width="1.3" /></svg>
<div class="t" style="left:632.00px;top:311.21px;font-size:6.75px;line-height:8.78px;color:#444;">Insert pivot table</div>
<div style="left:617.20px;top:325.90px;width:119.70px;height:0.70px;background:#cbcbcb"></div>
<div class="t" style="left:640.30px;top:332.51px;font-size:6.75px;line-height:8.78px;color:#444;border-bottom:0.7px dotted #999;padding-bottom:0.5px;">Show advanced settings</div>
<div style="left:743.10px;top:110.00px;width:24.90px;height:17.20px;background:#7d858c"></div>
<svg style="left:749.80px;top:88.60px;" width="13.2" height="13.2" viewBox="0 0 20 20"><rect x="3.5" y="4.5" width="13" height="11" fill="none" stroke="#555" stroke-width="1" /><rect x="6.5" y="7.5" width="7" height="5" fill="none" stroke="#555" stroke-width="1" /><rect x="3.5" y="7" width="3" height="1" fill="#555" /><rect x="13.5" y="7" width="3" height="1" fill="#555" /><rect x="3.5" y="12" width="3" height="1" fill="#555" /><rect x="13.5" y="12" width="3" height="1" fill="#555" /></svg>
<svg style="left:749.80px;top:112.10px;" width="13.2" height="13.2" viewBox="0 0 20 20"><rect x="3" y="5" width="14" height="10" fill="none" stroke="#fff" stroke-width="1.3" /><rect x="7.016666666666667" y="5" width="1.3" height="10" fill="#fff" /><rect x="11.683333333333334" y="5" width="1.3" height="10" fill="#fff" /><rect x="3" y="7.683333333333334" width="14" height="1.3" fill="#fff" /><rect x="3" y="11.016666666666667" width="14" height="1.3" fill="#fff" /></svg>
<svg style="left:749.80px;top:135.40px;" width="13.2" height="13.2" viewBox="0 0 20 20"><rect x="4.5" y="3.5" width="8" height="8" fill="none" stroke="#b0b0b0" stroke-width="1.1" /><circle cx="12.5" cy="12.5" r="4.3" fill="#f1f1f1" stroke="#b0b0b0" stroke-width="1.1"/></svg>
<svg style="left:749.80px;top:158.80px;" width="13.2" height="13.2" viewBox="0 0 20 20"><rect x="3.5" y="3.5" width="13" height="13" fill="none" stroke="#b0b0b0" stroke-width="1.1" /><path d="M4 13 L8 9.5 L11 12.5 L13 11 L16 13.5" fill="none" stroke="#b0b0b0" stroke-width="1.1" /><circle cx="12.5" cy="7" r="1.1" fill="#b0b0b0"/></svg>
<svg style="left:749.80px;top:182.50px;" width="13.2" height="13.2" viewBox="0 0 20 20"><rect x="3.5" y="11.5" width="3" height="5" fill="none" stroke="#b0b0b0" stroke-width="1.1" /><rect x="8.5" y="8.5" width="3" height="8" fill="none" stroke="#b0b0b0" stroke-width="1.1" /><rect x="13.5" y="3.5" width="3" height="13" fill="none" stroke="#b0b0b0" stroke-width="1.1" /></svg>
<svg style="left:749.80px;top:205.60px;" width="13.2" height="13.2" viewBox="0 0 20 20"><text x="10" y="15.5" font-size="14" text-anchor="middle" fill="#b0b0b0" font-family="Liberation Sans,sans-serif">¶</text></svg>
<svg style="left:749.80px;top:229.30px;" width="13.2" height="13.2" viewBox="0 0 20 20"><text x="9.5" y="11.5" font-size="11" text-anchor="middle" fill="#b0b0b0" font-family="Liberation Sans,sans-serif">Ta</text><path d="M4 17 q6 -4.5 12 0" fill="none" stroke="#b0b0b0" stroke-width="1.1" /></svg>
<svg style="left:749.80px;top:253.60px;" width="13.2" height="13.2" viewBox="0 0 20 20"><rect x="3.5" y="3.5" width="13" height="3" fill="none" stroke="#b0b0b0" stroke-width="1.1" rx="1"/><rect x="3.5" y="9.5" width="3" height="7" fill="none" stroke="#b0b0b0" stroke-width="1.1" rx="1"/><path d="M15 10 v3.5 h-4.5 M12.5 11.5 l-2 2 l2 2" fill="none" stroke="#b0b0b0" stroke-width="1.1" /></svg>
<svg style="left:749.80px;top:276.70px;" width="13.2" height="13.2" viewBox="0 0 20 20"><rect x="3.5" y="3.5" width="12" height="11" fill="none" stroke="#b0b0b0" stroke-width="1.1" /><rect x="4" y="4" width="11" height="3" fill="#b0b0b0" /><rect x="6" y="9" width="6" height="1" fill="#b0b0b0" /><rect x="6" y="11.5" width="4" height="1" fill="#b0b0b0" /><path d="M10 11 h8 l-3 3.4 v4 l-2 -1.2 v-2.8 z" fill="#b0b0b0" /></svg>
<div style="left:0.00px;top:423.40px;width:768.00px;height:15.60px;background:#f1f1f1;border-top:0.7px solid #cbcbcb"></div>
<svg style="left:11px;top:427.4px" width="4.7" height="7.9" viewBox="0 0 6 10"><path d="M5 .8 L1 5 L5 9.2" fill="none" stroke="#a2a2a2" stroke-width="1.1"/></svg>
<svg style="left:26.2px;top:427.4px" width="4.7" height="7.9" viewBox="0 0 6 10"><path d="M1 .8 L5 5 L1 9.2" fill="none" stroke="#a2a2a2" stroke-width="1.1"/></svg>
<div style="left:42.50px;top:423.40px;width:0.70px;height:16.00px;background:#dadada"></div>
<svg style="left:50.4px;top:427.8px" width="7.4" height="7.4" viewBox="0 0 10 10"><path d="M5 .5 V9.5 M.5 5 H9.5" fill="none" stroke="#444" stroke-width="1.2"/></svg>
<svg style="left:64.6px;top:428.4px" width="6.6" height="6.2" viewBox="0 0 10 9"><path d="M0 1 H10 M0 4.5 H10 M0 8 H10" fill="none" stroke="#444" stroke-width="1.2"/></svg>
<div style="left:80.00px;top:423.40px;width:0.70px;height:16.00px;background:#dadada"></div>
<div class="t" style="left:86.30px;top:427.68px;font-size:6.8px;line-height:8.84px;color:#a5a5a5;">Sheet1</div>
<div style="left:115.70px;top:423.40px;width:59.60px;height:15.60px;background:#fff;border-top:1.7px solid #3aa56c;border-left:0.7px solid #e2e2e2;border-right:0.7px solid #e2e2e2"></div>
<div class="t" style="left:122.20px;top:427.68px;font-size:6.8px;line-height:8.84px;color:#444;font-weight:bold;">Basic features</div>
<div style="left:175.60px;top:423.90px;width:75.00px;height:1.90px;background:#1c6a40"></div>
<div class="t" style="left:185.00px;top:427.68px;font-size:6.8px;line-height:8.84px;color:#a5a5a5;">Advanced features</div>
<div style="left:251.20px;top:423.40px;width:0.70px;height:16.00px;background:#cbcbcb"></div>
<div class="t" style="left:431.70px;top:427.68px;font-size:6.8px;line-height:8.84px;color:#444;font-weight:bold;">All changes saved</div>
<div class="t" style="left:685.00px;top:427.68px;font-size:6.8px;line-height:8.84px;color:#444;font-weight:bold;">Zoom 100%</div>
<svg style="left:668.2px;top:430.9px" width="6" height="1.2" viewBox="0 0 6 1.2"><rect width="6" height="1" fill="#444"/></svg>
<svg style="left:733.6px;top:427.8px" width="7.2" height="7.2" viewBox="0 0 10 10"><path d="M5 .5 V9.5 M.5 5 H9.5" fill="none" stroke="#444" stroke-width="1.1"/></svg>
</body></html>
